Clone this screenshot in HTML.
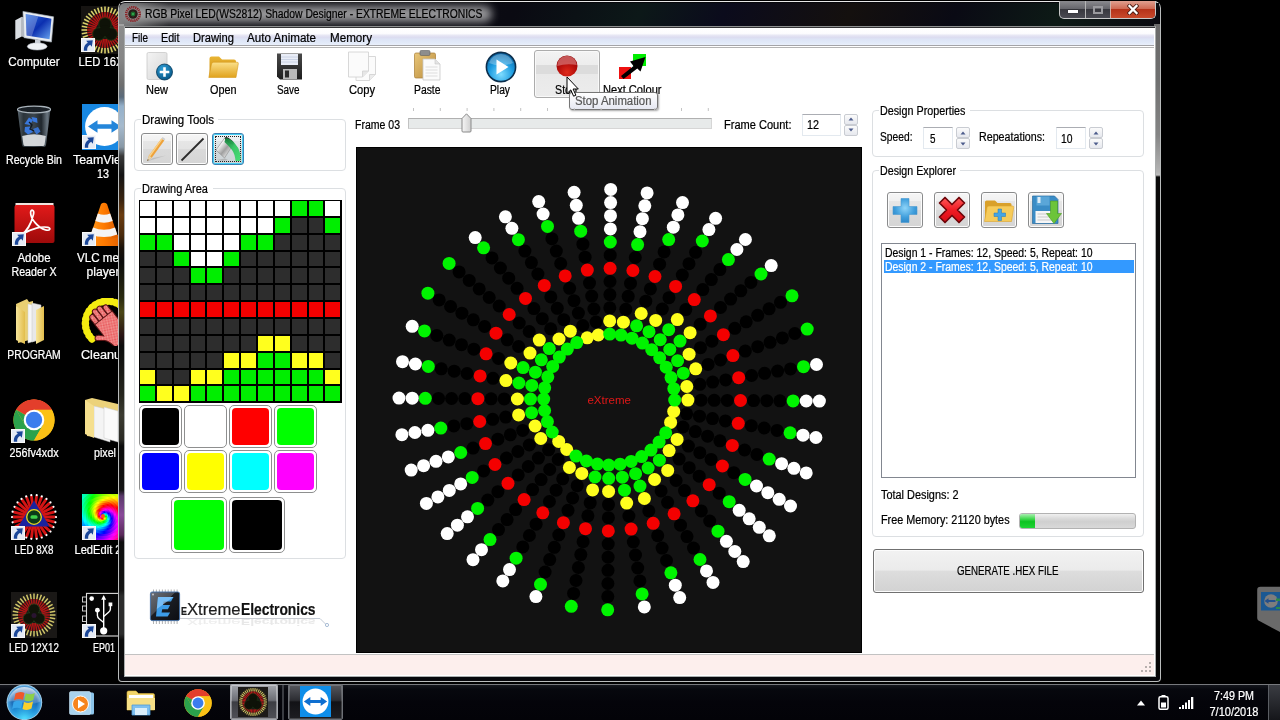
<!DOCTYPE html>
<html><head><meta charset="utf-8"><title>RGB Pixel LED(WS2812) Shadow Designer</title>
<style>
html,body{margin:0;padding:0}
body{width:1280px;height:720px;background:#000;position:relative;overflow:hidden;font-family:"Liberation Sans", sans-serif;font-size:12px}
div,span.t,svg{position:absolute;box-sizing:border-box}
span.t{white-space:nowrap;line-height:1;-webkit-text-stroke:.22px currentColor}
.gb{border:1px solid #dcdfe2;border-radius:4px}
.btn{border:1px solid #8a8b8c;border-radius:3px;background:linear-gradient(#f6f6f6 0,#f0f0f0 24%,#e6e6e6 25%,#e3e3e3 50%,#dadada 51%,#d5d5d5 100%);box-shadow:inset 0 0 0 1px #fcfcfc}
.num{border:1px solid #e3e9ef;border-top-color:#abadb3;background:#fff}
.pal{border:1px solid #8e8f8f;border-radius:5px;background:#fff}
.pal>i{position:absolute;left:2px;top:2px;right:2px;bottom:2px;border-radius:4px}
</style></head>
<body>
<div id="root" style="left:0;top:0;width:1280px;height:720px;will-change:transform">
<svg style="left:12px;top:8px" width="46" height="44" viewBox="0 0 42 40"><defs><linearGradient id="gsc" x1="0" y1="0" x2="1" y2="1"><stop offset="0" stop-color="#2d6fe0"/><stop offset=".5" stop-color="#0b2fb0"/><stop offset="1" stop-color="#6aa6f0"/></linearGradient></defs><path d="M3 11l6-3v18l-6 3z" fill="#d9dde2"/><path d="M9 8l3 1v18l-3-1z" fill="#b5bac2"/><path d="M10 3 38 8 36 31 11 27z" fill="#e8ecf1" stroke="#aab2bd" stroke-width=".6"/><path d="M12.500 5.500 36 9.800 34.300 28.500 13.300 25z" fill="url(#gsc)"/><path d="M12.500 5.500 24 7.600 18 26 13.300 25z" fill="#fff" opacity=".25"/><path d="M21 28.500l5 .8v4h-5z" fill="#c9ced6"/><ellipse cx="23" cy="35" rx="9" ry="3.300" fill="#eef1f5" stroke="#b6bcc6" stroke-width=".5"/></svg>
<span class="t" id="t0" style="font-size:12px;color:#fff;top:56.00px;left:34px;transform:translateX(-50%) scaleX(0.977);text-shadow:0 1px 2px #000,0 0 3px #000;">Computer</span>
<svg style="left:80.5px;top:5.5px" width="48" height="48" viewBox="0 0 48 48"><rect width="48" height="48" fill="#161412"/><line x1="33.0" y1="24.0" x2="42.0" y2="24.0" stroke="#b01414" stroke-width="1.6" stroke-linecap="butt"/><line x1="42.0" y1="24.0" x2="47.5" y2="24.0" stroke="#d9cf6a" stroke-width="1.6" stroke-linecap="butt"/><line x1="32.9" y1="25.4" x2="41.8" y2="26.8" stroke="#b01414" stroke-width="1.6" stroke-linecap="butt"/><line x1="41.8" y1="26.8" x2="47.2" y2="27.7" stroke="#d9cf6a" stroke-width="1.6" stroke-linecap="butt"/><line x1="32.6" y1="26.8" x2="41.1" y2="29.6" stroke="#b01414" stroke-width="1.6" stroke-linecap="butt"/><line x1="41.1" y1="29.6" x2="46.3" y2="31.3" stroke="#d9cf6a" stroke-width="1.6" stroke-linecap="butt"/><line x1="32.0" y1="28.1" x2="40.0" y2="32.2" stroke="#b01414" stroke-width="1.6" stroke-linecap="butt"/><line x1="40.0" y1="32.2" x2="44.9" y2="34.7" stroke="#d9cf6a" stroke-width="1.6" stroke-linecap="butt"/><line x1="31.3" y1="29.3" x2="38.6" y2="34.6" stroke="#b01414" stroke-width="1.6" stroke-linecap="butt"/><line x1="38.6" y1="34.6" x2="43.0" y2="37.8" stroke="#d9cf6a" stroke-width="1.6" stroke-linecap="butt"/><line x1="30.4" y1="30.4" x2="36.7" y2="36.7" stroke="#b01414" stroke-width="1.6" stroke-linecap="butt"/><line x1="36.7" y1="36.7" x2="40.6" y2="40.6" stroke="#d9cf6a" stroke-width="1.6" stroke-linecap="butt"/><line x1="29.3" y1="31.3" x2="34.6" y2="38.6" stroke="#b01414" stroke-width="1.6" stroke-linecap="butt"/><line x1="34.6" y1="38.6" x2="37.8" y2="43.0" stroke="#d9cf6a" stroke-width="1.6" stroke-linecap="butt"/><line x1="28.1" y1="32.0" x2="32.2" y2="40.0" stroke="#b01414" stroke-width="1.6" stroke-linecap="butt"/><line x1="32.2" y1="40.0" x2="34.7" y2="44.9" stroke="#d9cf6a" stroke-width="1.6" stroke-linecap="butt"/><line x1="26.8" y1="32.6" x2="29.6" y2="41.1" stroke="#b01414" stroke-width="1.6" stroke-linecap="butt"/><line x1="29.6" y1="41.1" x2="31.3" y2="46.3" stroke="#d9cf6a" stroke-width="1.6" stroke-linecap="butt"/><line x1="25.4" y1="32.9" x2="26.8" y2="41.8" stroke="#b01414" stroke-width="1.6" stroke-linecap="butt"/><line x1="26.8" y1="41.8" x2="27.7" y2="47.2" stroke="#d9cf6a" stroke-width="1.6" stroke-linecap="butt"/><line x1="24.0" y1="33.0" x2="24.0" y2="42.0" stroke="#b01414" stroke-width="1.6" stroke-linecap="butt"/><line x1="24.0" y1="42.0" x2="24.0" y2="47.5" stroke="#d9cf6a" stroke-width="1.6" stroke-linecap="butt"/><line x1="22.6" y1="32.9" x2="21.2" y2="41.8" stroke="#b01414" stroke-width="1.6" stroke-linecap="butt"/><line x1="21.2" y1="41.8" x2="20.3" y2="47.2" stroke="#d9cf6a" stroke-width="1.6" stroke-linecap="butt"/><line x1="21.2" y1="32.6" x2="18.4" y2="41.1" stroke="#b01414" stroke-width="1.6" stroke-linecap="butt"/><line x1="18.4" y1="41.1" x2="16.7" y2="46.3" stroke="#d9cf6a" stroke-width="1.6" stroke-linecap="butt"/><line x1="19.9" y1="32.0" x2="15.8" y2="40.0" stroke="#b01414" stroke-width="1.6" stroke-linecap="butt"/><line x1="15.8" y1="40.0" x2="13.3" y2="44.9" stroke="#d9cf6a" stroke-width="1.6" stroke-linecap="butt"/><line x1="18.7" y1="31.3" x2="13.4" y2="38.6" stroke="#b01414" stroke-width="1.6" stroke-linecap="butt"/><line x1="13.4" y1="38.6" x2="10.2" y2="43.0" stroke="#d9cf6a" stroke-width="1.6" stroke-linecap="butt"/><line x1="17.6" y1="30.4" x2="11.3" y2="36.7" stroke="#b01414" stroke-width="1.6" stroke-linecap="butt"/><line x1="11.3" y1="36.7" x2="7.4" y2="40.6" stroke="#d9cf6a" stroke-width="1.6" stroke-linecap="butt"/><line x1="16.7" y1="29.3" x2="9.4" y2="34.6" stroke="#b01414" stroke-width="1.6" stroke-linecap="butt"/><line x1="9.4" y1="34.6" x2="5.0" y2="37.8" stroke="#d9cf6a" stroke-width="1.6" stroke-linecap="butt"/><line x1="16.0" y1="28.1" x2="8.0" y2="32.2" stroke="#b01414" stroke-width="1.6" stroke-linecap="butt"/><line x1="8.0" y1="32.2" x2="3.1" y2="34.7" stroke="#d9cf6a" stroke-width="1.6" stroke-linecap="butt"/><line x1="15.4" y1="26.8" x2="6.9" y2="29.6" stroke="#b01414" stroke-width="1.6" stroke-linecap="butt"/><line x1="6.9" y1="29.6" x2="1.7" y2="31.3" stroke="#d9cf6a" stroke-width="1.6" stroke-linecap="butt"/><line x1="15.1" y1="25.4" x2="6.2" y2="26.8" stroke="#b01414" stroke-width="1.6" stroke-linecap="butt"/><line x1="6.2" y1="26.8" x2="0.8" y2="27.7" stroke="#d9cf6a" stroke-width="1.6" stroke-linecap="butt"/><line x1="15.0" y1="24.0" x2="6.0" y2="24.0" stroke="#b01414" stroke-width="1.6" stroke-linecap="butt"/><line x1="6.0" y1="24.0" x2="0.5" y2="24.0" stroke="#d9cf6a" stroke-width="1.6" stroke-linecap="butt"/><line x1="15.1" y1="22.6" x2="6.2" y2="21.2" stroke="#b01414" stroke-width="1.6" stroke-linecap="butt"/><line x1="6.2" y1="21.2" x2="0.8" y2="20.3" stroke="#d9cf6a" stroke-width="1.6" stroke-linecap="butt"/><line x1="15.4" y1="21.2" x2="6.9" y2="18.4" stroke="#b01414" stroke-width="1.6" stroke-linecap="butt"/><line x1="6.9" y1="18.4" x2="1.7" y2="16.7" stroke="#d9cf6a" stroke-width="1.6" stroke-linecap="butt"/><line x1="16.0" y1="19.9" x2="8.0" y2="15.8" stroke="#b01414" stroke-width="1.6" stroke-linecap="butt"/><line x1="8.0" y1="15.8" x2="3.1" y2="13.3" stroke="#d9cf6a" stroke-width="1.6" stroke-linecap="butt"/><line x1="16.7" y1="18.7" x2="9.4" y2="13.4" stroke="#b01414" stroke-width="1.6" stroke-linecap="butt"/><line x1="9.4" y1="13.4" x2="5.0" y2="10.2" stroke="#d9cf6a" stroke-width="1.6" stroke-linecap="butt"/><line x1="17.6" y1="17.6" x2="11.3" y2="11.3" stroke="#b01414" stroke-width="1.6" stroke-linecap="butt"/><line x1="11.3" y1="11.3" x2="7.4" y2="7.4" stroke="#d9cf6a" stroke-width="1.6" stroke-linecap="butt"/><line x1="18.7" y1="16.7" x2="13.4" y2="9.4" stroke="#b01414" stroke-width="1.6" stroke-linecap="butt"/><line x1="13.4" y1="9.4" x2="10.2" y2="5.0" stroke="#d9cf6a" stroke-width="1.6" stroke-linecap="butt"/><line x1="19.9" y1="16.0" x2="15.8" y2="8.0" stroke="#b01414" stroke-width="1.6" stroke-linecap="butt"/><line x1="15.8" y1="8.0" x2="13.3" y2="3.1" stroke="#d9cf6a" stroke-width="1.6" stroke-linecap="butt"/><line x1="21.2" y1="15.4" x2="18.4" y2="6.9" stroke="#b01414" stroke-width="1.6" stroke-linecap="butt"/><line x1="18.4" y1="6.9" x2="16.7" y2="1.7" stroke="#d9cf6a" stroke-width="1.6" stroke-linecap="butt"/><line x1="22.6" y1="15.1" x2="21.2" y2="6.2" stroke="#b01414" stroke-width="1.6" stroke-linecap="butt"/><line x1="21.2" y1="6.2" x2="20.3" y2="0.8" stroke="#d9cf6a" stroke-width="1.6" stroke-linecap="butt"/><line x1="24.0" y1="15.0" x2="24.0" y2="6.0" stroke="#b01414" stroke-width="1.6" stroke-linecap="butt"/><line x1="24.0" y1="6.0" x2="24.0" y2="0.5" stroke="#d9cf6a" stroke-width="1.6" stroke-linecap="butt"/><line x1="25.4" y1="15.1" x2="26.8" y2="6.2" stroke="#b01414" stroke-width="1.6" stroke-linecap="butt"/><line x1="26.8" y1="6.2" x2="27.7" y2="0.8" stroke="#d9cf6a" stroke-width="1.6" stroke-linecap="butt"/><line x1="26.8" y1="15.4" x2="29.6" y2="6.9" stroke="#b01414" stroke-width="1.6" stroke-linecap="butt"/><line x1="29.6" y1="6.9" x2="31.3" y2="1.7" stroke="#d9cf6a" stroke-width="1.6" stroke-linecap="butt"/><line x1="28.1" y1="16.0" x2="32.2" y2="8.0" stroke="#b01414" stroke-width="1.6" stroke-linecap="butt"/><line x1="32.2" y1="8.0" x2="34.7" y2="3.1" stroke="#d9cf6a" stroke-width="1.6" stroke-linecap="butt"/><line x1="29.3" y1="16.7" x2="34.6" y2="9.4" stroke="#b01414" stroke-width="1.6" stroke-linecap="butt"/><line x1="34.6" y1="9.4" x2="37.8" y2="5.0" stroke="#d9cf6a" stroke-width="1.6" stroke-linecap="butt"/><line x1="30.4" y1="17.6" x2="36.7" y2="11.3" stroke="#b01414" stroke-width="1.6" stroke-linecap="butt"/><line x1="36.7" y1="11.3" x2="40.6" y2="7.4" stroke="#d9cf6a" stroke-width="1.6" stroke-linecap="butt"/><line x1="31.3" y1="18.7" x2="38.6" y2="13.4" stroke="#b01414" stroke-width="1.6" stroke-linecap="butt"/><line x1="38.6" y1="13.4" x2="43.0" y2="10.2" stroke="#d9cf6a" stroke-width="1.6" stroke-linecap="butt"/><line x1="32.0" y1="19.9" x2="40.0" y2="15.8" stroke="#b01414" stroke-width="1.6" stroke-linecap="butt"/><line x1="40.0" y1="15.8" x2="44.9" y2="13.3" stroke="#d9cf6a" stroke-width="1.6" stroke-linecap="butt"/><line x1="32.6" y1="21.2" x2="41.1" y2="18.4" stroke="#b01414" stroke-width="1.6" stroke-linecap="butt"/><line x1="41.1" y1="18.4" x2="46.3" y2="16.7" stroke="#d9cf6a" stroke-width="1.6" stroke-linecap="butt"/><line x1="32.9" y1="22.6" x2="41.8" y2="21.2" stroke="#b01414" stroke-width="1.6" stroke-linecap="butt"/><line x1="41.8" y1="21.2" x2="47.2" y2="20.3" stroke="#d9cf6a" stroke-width="1.6" stroke-linecap="butt"/><g fill="#0e1208" stroke="#1c3a12" stroke-width=".8"><circle cx="24" cy="18" r="6.300"/><circle cx="18" cy="28" r="6.300"/><circle cx="30" cy="28" r="6.300"/></g><circle cx="24" cy="24.500" r="5.500" fill="#0e1208"/></svg>
<svg style="left:81px;top:38px" width="14" height="14" viewBox="0 0 14 14"><rect x=".5" y=".5" width="13" height="13" fill="#e4eaf4" stroke="#f8f8f8" stroke-width="1"/><path d="M2.800 12.800C2.600 8.600 4 6 6.800 4.800L5.200 2.800 11.800 2.200 10.800 8.800 9.200 6.800C7 7.800 5.800 9.800 6.200 12.800z" fill="#1a4698"/></svg>
<span class="t" id="t1" style="font-size:12px;color:#fff;top:56.00px;left:100.5px;transform:translateX(-50%) scaleX(0.937);text-shadow:0 1px 2px #000,0 0 3px #000;">LED 16X</span>
<svg style="left:16px;top:105px" width="36" height="43" viewBox="0 0 36 43"><defs><linearGradient id="grb" x1="0" y1="0" x2="1" y2="0"><stop offset="0" stop-color="#59656e"/><stop offset=".18" stop-color="#2c353c"/><stop offset=".5" stop-color="#3a444c"/><stop offset=".72" stop-color="#20272d"/><stop offset=".9" stop-color="#6a7680"/><stop offset="1" stop-color="#3a444c"/></linearGradient></defs><path d="M1.500 4.500h33l-4.500 35.500q-.3 2-2.300 2H8.300q-2 0-2.300-2z" fill="url(#grb)"/><ellipse cx="18" cy="4.500" rx="16.500" ry="3.300" fill="#1a2026" stroke="#aab4bc" stroke-width="1.200"/><path d="M6.200 31q12-3.500 23.600 0l-1.200 8.500q-.2 1.500-1.800 1.500H9.200q-1.600 0-1.800-1.500z" fill="#e2e4e6" opacity=".92"/><g fill="#3a78dc"><path d="M8.500 19l4.500-6.500 4 2.500-3 5z"/><path d="M15.500 12l5.500 1 .5 5-4.500-1.500z"/><path d="M9 22l5-.5 3 5.500-5 2.500-3.500-3z"/><path d="M17 24l5-2 2.500 4.500-4 3z" opacity=".9"/></g><path d="M13 17l3 3-2 4 4 2" fill="none" stroke="#101820" stroke-width="1.300"/></svg>
<span class="t" id="t2" style="font-size:12px;color:#fff;top:153.50px;left:34px;transform:translateX(-50%) scaleX(0.884);text-shadow:0 1px 2px #000,0 0 3px #000;">Recycle Bin</span>
<svg style="left:82px;top:104px" width="46" height="46" viewBox="0 0 46 46"><rect width="46" height="46" fill="#1888e2"/><circle cx="22.500" cy="22.500" r="19.400" fill="#fff"/><path d="M6 22.500l9.500-6.200v4h14v-4L39 22.500l-9.500 6.200v-4h-14v4z" fill="#2486da"/></svg>
<svg style="left:82px;top:135px" width="14" height="14" viewBox="0 0 14 14"><rect x=".5" y=".5" width="13" height="13" fill="#e4eaf4" stroke="#f8f8f8" stroke-width="1"/><path d="M2.800 12.800C2.600 8.600 4 6 6.800 4.800L5.200 2.800 11.800 2.200 10.800 8.800 9.200 6.800C7 7.800 5.800 9.800 6.200 12.800z" fill="#1a4698"/></svg>
<span class="t" id="t3" style="font-size:12px;color:#fff;top:153.50px;left:97px;transform:translateX(-50%) scaleX(1.033);text-shadow:0 1px 2px #000,0 0 3px #000;">TeamVie</span>
<span class="t" id="t4" style="font-size:12px;color:#fff;top:167.50px;left:102.5px;transform:translateX(-50%) scaleX(0.898);text-shadow:0 1px 2px #000,0 0 3px #000;">13</span>
<svg style="left:12.5px;top:200.5px" width="43" height="43" viewBox="0 0 42 43"><defs><linearGradient id="gad" x1="0" y1="0" x2="0" y2="1"><stop offset="0" stop-color="#e21a1a"/><stop offset="1" stop-color="#9d0a0a"/></linearGradient></defs><path d="M2 2h38v3H2z" fill="#f0e4e0"/><rect x="1" y="4" width="40" height="38" rx="2" fill="url(#gad)"/><path d="M10 33c4-2 8-9 10-17 1-4-2.500-5-2.500-1.500 0 5 6 13 13 15 4 1 5-1.500 2-2.200-5-1.200-14 1-22 5.700z" fill="none" stroke="#fff" stroke-width="1.500" transform="translate(-3 -5) scale(1.150)"/></svg>
<svg style="left:11.5px;top:232px" width="14" height="14" viewBox="0 0 14 14"><rect x=".5" y=".5" width="13" height="13" fill="#e4eaf4" stroke="#f8f8f8" stroke-width="1"/><path d="M2.800 12.800C2.600 8.600 4 6 6.800 4.800L5.200 2.800 11.800 2.200 10.800 8.800 9.200 6.800C7 7.800 5.800 9.800 6.200 12.800z" fill="#1a4698"/></svg>
<span class="t" id="t5" style="font-size:12px;color:#fff;top:251.50px;left:33.5px;transform:translateX(-50%) scaleX(0.951);text-shadow:0 1px 2px #000,0 0 3px #000;">Adobe</span>
<span class="t" id="t6" style="font-size:12px;color:#fff;top:265.50px;left:33.5px;transform:translateX(-50%) scaleX(0.888);text-shadow:0 1px 2px #000,0 0 3px #000;">Reader X</span>
<svg style="left:82px;top:201px" width="44" height="46" viewBox="0 0 44 46"><defs><linearGradient id="gvl" x1="0" y1="0" x2="1" y2="0"><stop offset="0" stop-color="#ff9a1e"/><stop offset=".5" stop-color="#ff7a00"/><stop offset="1" stop-color="#d95a00"/></linearGradient></defs><path d="M4 34h36l3 9q.5 2-1.500 2H2.500q-2 0-1.500-2z" fill="url(#gvl)"/><path d="M19 3q3-2.500 6 0l11 33q-14 6-28 0z" fill="url(#gvl)"/><path d="M15.800 12.500q6.200 2.500 12.400 0l2.500 7.500q-8.700 3.500-17.400 0z" fill="#f4f4f4"/><path d="M11 26.500q11 4.500 22 0l2.300 7q-13.300 5-26.600 0z" fill="#f4f4f4"/></svg>
<svg style="left:82px;top:232px" width="14" height="14" viewBox="0 0 14 14"><rect x=".5" y=".5" width="13" height="13" fill="#e4eaf4" stroke="#f8f8f8" stroke-width="1"/><path d="M2.800 12.800C2.600 8.600 4 6 6.800 4.800L5.200 2.800 11.800 2.200 10.800 8.800 9.200 6.800C7 7.800 5.800 9.800 6.200 12.800z" fill="#1a4698"/></svg>
<span class="t" id="t7" style="font-size:12px;color:#fff;top:251.50px;left:97.5px;transform:translateX(-50%) scaleX(0.969);text-shadow:0 1px 2px #000,0 0 3px #000;">VLC me</span>
<span class="t" id="t8" style="font-size:12px;color:#fff;top:265.50px;left:103px;transform:translateX(-50%) scaleX(1.010);text-shadow:0 1px 2px #000,0 0 3px #000;">player</span>
<svg style="left:14px;top:298px" width="36" height="47" viewBox="0 0 36 47"><defs><linearGradient id="gfd" x1="0" y1="0" x2="1" y2="0"><stop offset="0" stop-color="#f7e59a"/><stop offset="1" stop-color="#e2bd4c"/></linearGradient></defs><path d="M2 6 13 1l2 3 4-1v38L4 45z" fill="#e9cf72"/><path d="M14 6l10 2v34l-10 3z" fill="#f6f6f6" stroke="#cfcfcf" stroke-width=".5"/><path d="M18 5l9 2v34l-9 3z" fill="#e8e8e8" stroke="#c4c4c4" stroke-width=".5"/><path d="M2 8l9 6v32l-9-4z" fill="url(#gfd)"/><path d="M22 12 30 8v34l-8 4z" fill="url(#gfd)"/></svg>
<span class="t" id="t9" style="font-size:12px;color:#fff;top:348.50px;left:33.5px;transform:translateX(-50%) scaleX(0.863);text-shadow:0 1px 2px #000,0 0 3px #000;">PROGRAM</span>
<svg style="left:80px;top:298px" width="48" height="48" viewBox="0 0 48 48"><defs><pattern id="pdot" width="2" height="2" patternUnits="userSpaceOnUse"><rect width="2" height="2" fill="#f29a96"/><rect width="1" height="1" fill="#e8565a"/><rect x="1" y="1" width="1" height="1" fill="#e8565a"/></pattern></defs><path d="M43 9.500A21 21 0 1 0 12 41" fill="none" stroke="#f4ec10" stroke-width="7.500" stroke-linecap="round" stroke-dasharray="0.100 4.200"/><path d="M43 9.500A21 21 0 1 0 12 41" fill="none" stroke="#f4ec10" stroke-width="5.500"/><g transform="rotate(-38 28 26) translate(-2.500 -1.500) scale(1.100)" stroke="#5a1414" stroke-width=".9" fill="url(#pdot)"><rect x="18" y="9" width="4.600" height="13" rx="2.300"/><rect x="23" y="6.500" width="4.600" height="15" rx="2.300"/><rect x="28" y="7" width="4.600" height="15" rx="2.300"/><rect x="33" y="9.500" width="4.600" height="13" rx="2.300"/><path d="M18 18h20v14q0 4 3 14H20q-1-8-4-11l-5-4q-2-2 0-3.500t4 .5l3 3z"/></g></svg>
<span class="t" id="t10" style="font-size:12px;color:#fff;top:348.50px;left:101px;transform:translateX(-50%) scaleX(1.052);text-shadow:0 1px 2px #000,0 0 3px #000;">Cleanu</span>
<svg style="left:13px;top:399px" width="42" height="42" viewBox="-50 -50 100 100"><circle r="49" fill="#fbc116"/><path d="M0 0 L-42.400 -24.500 A49 49 0 0 1 42.400 -24.500 L0 -24.500z" fill="#e33e2b"/><path d="M-42.400 -24.500 A49 49 0 0 1 42.400 -24.500 L0 -24.500z" fill="#e33e2b"/><path d="M-42.400 -24.500 A49 49 0 0 0 0 49 L21.200 12.200 L-21.200 12.200z" fill="#2ba24c"/><path d="M0 0L-42.400 -24.500 -21.200 12.200z" fill="#2ba24c"/><path d="M42.400 -24.500H0L21.200 12.200 0 49A49 49 0 0 0 42.400 -24.500z" fill="#fbc116"/><circle r="24.500" fill="#fff"/><circle r="19.500" fill="#3b7ded"/></svg>
<svg style="left:11px;top:429px" width="14" height="14" viewBox="0 0 14 14"><rect x=".5" y=".5" width="13" height="13" fill="#e4eaf4" stroke="#f8f8f8" stroke-width="1"/><path d="M2.800 12.800C2.600 8.600 4 6 6.800 4.800L5.200 2.800 11.800 2.200 10.800 8.800 9.200 6.800C7 7.800 5.800 9.800 6.200 12.800z" fill="#1a4698"/></svg>
<span class="t" id="t11" style="font-size:12px;color:#fff;top:446.50px;left:33.5px;transform:translateX(-50%) scaleX(0.896);text-shadow:0 1px 2px #000,0 0 3px #000;">256fv4xdx</span>
<svg style="left:84px;top:397px" width="40" height="47" viewBox="0 0 40 47"><path d="M1 3 8 1l26 6v36L3 39z" fill="#ecd27a"/><path d="M10 9 26 13v32L10 40z" fill="#f4f4f4" stroke="#c9c9c9" stroke-width=".5"/><path d="M20 10l14 4v31l-14-4z" fill="#fafafa" stroke="#c9c9c9" stroke-width=".5"/><path d="M1 3l9 6v32l-9-4z" fill="#f5df8e"/></svg>
<span class="t" id="t12" style="font-size:12px;color:#fff;top:446.50px;left:104.5px;transform:translateX(-50%) scaleX(0.891);text-shadow:0 1px 2px #000,0 0 3px #000;">pixel</span>
<svg style="left:11px;top:494px" width="46" height="46" viewBox="0 0 46 46"><line x1="32.0" y1="23.0" x2="43.5" y2="23.0" stroke="#d41414" stroke-width="2.8" stroke-linecap="round"/><line x1="31.7" y1="25.2" x2="42.9" y2="27.9" stroke="#d41414" stroke-width="2.8" stroke-linecap="round"/><line x1="31.0" y1="27.2" x2="41.2" y2="32.5" stroke="#d41414" stroke-width="2.8" stroke-linecap="round"/><line x1="29.7" y1="29.0" x2="38.3" y2="36.6" stroke="#d41414" stroke-width="2.8" stroke-linecap="round"/><line x1="28.1" y1="30.4" x2="34.6" y2="39.9" stroke="#d41414" stroke-width="2.8" stroke-linecap="round"/><line x1="26.2" y1="31.4" x2="30.3" y2="42.2" stroke="#d41414" stroke-width="2.8" stroke-linecap="round"/><line x1="24.1" y1="31.9" x2="25.5" y2="43.4" stroke="#d41414" stroke-width="2.8" stroke-linecap="round"/><line x1="21.9" y1="31.9" x2="20.5" y2="43.4" stroke="#d41414" stroke-width="2.8" stroke-linecap="round"/><line x1="19.8" y1="31.4" x2="15.7" y2="42.2" stroke="#d41414" stroke-width="2.8" stroke-linecap="round"/><line x1="17.9" y1="30.4" x2="11.4" y2="39.9" stroke="#d41414" stroke-width="2.8" stroke-linecap="round"/><line x1="16.3" y1="29.0" x2="7.7" y2="36.6" stroke="#d41414" stroke-width="2.8" stroke-linecap="round"/><line x1="15.0" y1="27.2" x2="4.8" y2="32.5" stroke="#d41414" stroke-width="2.8" stroke-linecap="round"/><line x1="14.3" y1="25.2" x2="3.1" y2="27.9" stroke="#d41414" stroke-width="2.8" stroke-linecap="round"/><line x1="14.0" y1="23.0" x2="2.5" y2="23.0" stroke="#d41414" stroke-width="2.8" stroke-linecap="round"/><line x1="14.3" y1="20.8" x2="3.1" y2="18.1" stroke="#d41414" stroke-width="2.8" stroke-linecap="round"/><line x1="15.0" y1="18.8" x2="4.8" y2="13.5" stroke="#d41414" stroke-width="2.8" stroke-linecap="round"/><line x1="16.3" y1="17.0" x2="7.7" y2="9.4" stroke="#d41414" stroke-width="2.8" stroke-linecap="round"/><line x1="17.9" y1="15.6" x2="11.4" y2="6.1" stroke="#d41414" stroke-width="2.8" stroke-linecap="round"/><line x1="19.8" y1="14.6" x2="15.7" y2="3.8" stroke="#d41414" stroke-width="2.8" stroke-linecap="round"/><line x1="21.9" y1="14.1" x2="20.5" y2="2.6" stroke="#d41414" stroke-width="2.8" stroke-linecap="round"/><line x1="24.1" y1="14.1" x2="25.5" y2="2.6" stroke="#d41414" stroke-width="2.8" stroke-linecap="round"/><line x1="26.2" y1="14.6" x2="30.3" y2="3.8" stroke="#d41414" stroke-width="2.8" stroke-linecap="round"/><line x1="28.1" y1="15.6" x2="34.6" y2="6.1" stroke="#d41414" stroke-width="2.8" stroke-linecap="round"/><line x1="29.7" y1="17.0" x2="38.3" y2="9.4" stroke="#d41414" stroke-width="2.8" stroke-linecap="round"/><line x1="31.0" y1="18.8" x2="41.2" y2="13.5" stroke="#d41414" stroke-width="2.8" stroke-linecap="round"/><line x1="31.7" y1="20.8" x2="42.9" y2="18.1" stroke="#d41414" stroke-width="2.8" stroke-linecap="round"/><path d="M23 6.500 38.500 32.500H7.500z" fill="#1a22a0"/><circle cx="23" cy="23" r="7.300" fill="#0c3a18" stroke="#e8dc1e" stroke-width="1.300"/><rect x="19.500" y="21.300" width="7" height="3.400" rx="1.500" fill="#3fd04a"/></svg>
<svg style="left:11px;top:494px" width="46" height="46" viewBox="0 0 46 46"><circle cx="45.0" cy="23.0" r="1.100" fill="#fff"/><circle cx="44.4" cy="28.3" r="1.100" fill="#fff"/><circle cx="42.5" cy="33.2" r="1.100" fill="#fff"/><circle cx="39.5" cy="37.6" r="1.100" fill="#fff"/><circle cx="35.5" cy="41.1" r="1.100" fill="#fff"/><circle cx="30.8" cy="43.6" r="1.100" fill="#fff"/><circle cx="25.7" cy="44.8" r="1.100" fill="#fff"/><circle cx="20.3" cy="44.8" r="1.100" fill="#fff"/><circle cx="15.2" cy="43.6" r="1.100" fill="#fff"/><circle cx="10.5" cy="41.1" r="1.100" fill="#fff"/><circle cx="6.5" cy="37.6" r="1.100" fill="#fff"/><circle cx="3.5" cy="33.2" r="1.100" fill="#fff"/><circle cx="1.6" cy="28.3" r="1.100" fill="#fff"/><circle cx="1.0" cy="23.0" r="1.100" fill="#fff"/><circle cx="1.6" cy="17.7" r="1.100" fill="#fff"/><circle cx="3.5" cy="12.8" r="1.100" fill="#fff"/><circle cx="6.5" cy="8.4" r="1.100" fill="#fff"/><circle cx="10.5" cy="4.9" r="1.100" fill="#fff"/><circle cx="15.2" cy="2.4" r="1.100" fill="#fff"/><circle cx="20.3" cy="1.2" r="1.100" fill="#fff"/><circle cx="25.7" cy="1.2" r="1.100" fill="#fff"/><circle cx="30.8" cy="2.4" r="1.100" fill="#fff"/><circle cx="35.5" cy="4.9" r="1.100" fill="#fff"/><circle cx="39.5" cy="8.4" r="1.100" fill="#fff"/><circle cx="42.5" cy="12.8" r="1.100" fill="#fff"/><circle cx="44.4" cy="17.7" r="1.100" fill="#fff"/></svg>
<svg style="left:11px;top:526px" width="14" height="14" viewBox="0 0 14 14"><rect x=".5" y=".5" width="13" height="13" fill="#e4eaf4" stroke="#f8f8f8" stroke-width="1"/><path d="M2.800 12.800C2.600 8.600 4 6 6.800 4.800L5.200 2.800 11.800 2.200 10.800 8.800 9.200 6.800C7 7.800 5.800 9.800 6.200 12.800z" fill="#1a4698"/></svg>
<span class="t" id="t13" style="font-size:12px;color:#fff;top:543.50px;left:33.5px;transform:translateX(-50%) scaleX(0.812);text-shadow:0 1px 2px #000,0 0 3px #000;">LED 8X8</span>
<div style="left:82px;top:494px;width:46px;height:46px;overflow:hidden;background:#0f0"><div style="left:-12.7px;top:-11.8px;width:68px;height:68px;border-radius:50%;background:conic-gradient(from 135deg,#f00,#f0f,#00f,#0ff,#0f0,#ff0,#f00)"></div><div style="left:-8.7px;top:-7.8px;width:60px;height:60px;border-radius:50%;background:conic-gradient(from 120deg,#f00,#f0f,#00f,#0ff,#0f0,#ff0,#f00)"></div><div style="left:-4.7px;top:-3.8px;width:52px;height:52px;border-radius:50%;background:conic-gradient(from 104deg,#f00,#f0f,#00f,#0ff,#0f0,#ff0,#f00)"></div><div style="left:-1.7px;top:-0.8px;width:46px;height:46px;border-radius:50%;background:conic-gradient(from 90deg,#f00,#f0f,#00f,#0ff,#0f0,#ff0,#f00)"></div><div style="left:1.3px;top:2.2px;width:40px;height:40px;border-radius:50%;background:conic-gradient(from 74deg,#f00,#f0f,#00f,#0ff,#0f0,#ff0,#f00)"></div><div style="left:3.8px;top:4.7px;width:35.0px;height:35.0px;border-radius:50%;background:conic-gradient(from 58deg,#f00,#f0f,#00f,#0ff,#0f0,#ff0,#f00)"></div><div style="left:6.3px;top:7.2px;width:30px;height:30px;border-radius:50%;background:conic-gradient(from 40deg,#f00,#f0f,#00f,#0ff,#0f0,#ff0,#f00)"></div><div style="left:8.3px;top:9.2px;width:26px;height:26px;border-radius:50%;background:conic-gradient(from 23deg,#f00,#f0f,#00f,#0ff,#0f0,#ff0,#f00)"></div><div style="left:10.3px;top:11.2px;width:22px;height:22px;border-radius:50%;background:conic-gradient(from 3deg,#f00,#f0f,#00f,#0ff,#0f0,#ff0,#f00)"></div><div style="left:11.8px;top:12.7px;width:19.0px;height:19.0px;border-radius:50%;background:conic-gradient(from -15deg,#f00,#f0f,#00f,#0ff,#0f0,#ff0,#f00)"></div><div style="left:13.3px;top:14.2px;width:16px;height:16px;border-radius:50%;background:conic-gradient(from -36deg,#f00,#f0f,#00f,#0ff,#0f0,#ff0,#f00)"></div><div style="left:14.8px;top:15.7px;width:13.0px;height:13.0px;border-radius:50%;background:conic-gradient(from -62deg,#f00,#f0f,#00f,#0ff,#0f0,#ff0,#f00)"></div><div style="left:16.3px;top:17.2px;width:10px;height:10px;border-radius:50%;background:conic-gradient(from -98deg,#f00,#f0f,#00f,#0ff,#0f0,#ff0,#f00)"></div><div style="left:17.8px;top:18.7px;width:7.0px;height:7.0px;border-radius:50%;background:conic-gradient(from -149deg,#f00,#f0f,#00f,#0ff,#0f0,#ff0,#f00)"></div><div style="left:19.1px;top:20.0px;width:4.4px;height:4.4px;border-radius:50%;background:#ff5a10"></div></div>
<svg style="left:82px;top:526px" width="14" height="14" viewBox="0 0 14 14"><rect x=".5" y=".5" width="13" height="13" fill="#e4eaf4" stroke="#f8f8f8" stroke-width="1"/><path d="M2.800 12.800C2.600 8.600 4 6 6.800 4.800L5.200 2.800 11.800 2.200 10.800 8.800 9.200 6.800C7 7.800 5.800 9.800 6.200 12.800z" fill="#1a4698"/></svg>
<span class="t" id="t14" style="font-size:12px;color:#fff;top:543.50px;left:97.5px;transform:translateX(-50%) scaleX(0.927);text-shadow:0 1px 2px #000,0 0 3px #000;">LedEdit 2</span>
<svg style="left:11px;top:592px" width="46" height="46" viewBox="0 0 46 46"><rect width="46" height="46" fill="#1a1816"/><line x1="31.0" y1="23.0" x2="39.0" y2="23.0" stroke="#b01616" stroke-width="1.5" stroke-linecap="butt"/><line x1="39.0" y1="23.0" x2="44.5" y2="23.0" stroke="#cfc468" stroke-width="1.5" stroke-linecap="butt"/><line x1="30.9" y1="24.4" x2="38.8" y2="25.8" stroke="#b01616" stroke-width="1.5" stroke-linecap="butt"/><line x1="38.8" y1="25.8" x2="44.2" y2="26.7" stroke="#cfc468" stroke-width="1.5" stroke-linecap="butt"/><line x1="30.5" y1="25.7" x2="38.0" y2="28.5" stroke="#b01616" stroke-width="1.5" stroke-linecap="butt"/><line x1="38.0" y1="28.5" x2="43.2" y2="30.4" stroke="#cfc468" stroke-width="1.5" stroke-linecap="butt"/><line x1="29.9" y1="27.0" x2="36.9" y2="31.0" stroke="#b01616" stroke-width="1.5" stroke-linecap="butt"/><line x1="36.9" y1="31.0" x2="41.6" y2="33.8" stroke="#cfc468" stroke-width="1.5" stroke-linecap="butt"/><line x1="29.1" y1="28.1" x2="35.3" y2="33.3" stroke="#b01616" stroke-width="1.5" stroke-linecap="butt"/><line x1="35.3" y1="33.3" x2="39.5" y2="36.8" stroke="#cfc468" stroke-width="1.5" stroke-linecap="butt"/><line x1="28.1" y1="29.1" x2="33.3" y2="35.3" stroke="#b01616" stroke-width="1.5" stroke-linecap="butt"/><line x1="33.3" y1="35.3" x2="36.8" y2="39.5" stroke="#cfc468" stroke-width="1.5" stroke-linecap="butt"/><line x1="27.0" y1="29.9" x2="31.0" y2="36.9" stroke="#b01616" stroke-width="1.5" stroke-linecap="butt"/><line x1="31.0" y1="36.9" x2="33.8" y2="41.6" stroke="#cfc468" stroke-width="1.5" stroke-linecap="butt"/><line x1="25.7" y1="30.5" x2="28.5" y2="38.0" stroke="#b01616" stroke-width="1.5" stroke-linecap="butt"/><line x1="28.5" y1="38.0" x2="30.4" y2="43.2" stroke="#cfc468" stroke-width="1.5" stroke-linecap="butt"/><line x1="24.4" y1="30.9" x2="25.8" y2="38.8" stroke="#b01616" stroke-width="1.5" stroke-linecap="butt"/><line x1="25.8" y1="38.8" x2="26.7" y2="44.2" stroke="#cfc468" stroke-width="1.5" stroke-linecap="butt"/><line x1="23.0" y1="31.0" x2="23.0" y2="39.0" stroke="#b01616" stroke-width="1.5" stroke-linecap="butt"/><line x1="23.0" y1="39.0" x2="23.0" y2="44.5" stroke="#cfc468" stroke-width="1.5" stroke-linecap="butt"/><line x1="21.6" y1="30.9" x2="20.2" y2="38.8" stroke="#b01616" stroke-width="1.5" stroke-linecap="butt"/><line x1="20.2" y1="38.8" x2="19.3" y2="44.2" stroke="#cfc468" stroke-width="1.5" stroke-linecap="butt"/><line x1="20.3" y1="30.5" x2="17.5" y2="38.0" stroke="#b01616" stroke-width="1.5" stroke-linecap="butt"/><line x1="17.5" y1="38.0" x2="15.6" y2="43.2" stroke="#cfc468" stroke-width="1.5" stroke-linecap="butt"/><line x1="19.0" y1="29.9" x2="15.0" y2="36.9" stroke="#b01616" stroke-width="1.5" stroke-linecap="butt"/><line x1="15.0" y1="36.9" x2="12.3" y2="41.6" stroke="#cfc468" stroke-width="1.5" stroke-linecap="butt"/><line x1="17.9" y1="29.1" x2="12.7" y2="35.3" stroke="#b01616" stroke-width="1.5" stroke-linecap="butt"/><line x1="12.7" y1="35.3" x2="9.2" y2="39.5" stroke="#cfc468" stroke-width="1.5" stroke-linecap="butt"/><line x1="16.9" y1="28.1" x2="10.7" y2="33.3" stroke="#b01616" stroke-width="1.5" stroke-linecap="butt"/><line x1="10.7" y1="33.3" x2="6.5" y2="36.8" stroke="#cfc468" stroke-width="1.5" stroke-linecap="butt"/><line x1="16.1" y1="27.0" x2="9.1" y2="31.0" stroke="#b01616" stroke-width="1.5" stroke-linecap="butt"/><line x1="9.1" y1="31.0" x2="4.4" y2="33.8" stroke="#cfc468" stroke-width="1.5" stroke-linecap="butt"/><line x1="15.5" y1="25.7" x2="8.0" y2="28.5" stroke="#b01616" stroke-width="1.5" stroke-linecap="butt"/><line x1="8.0" y1="28.5" x2="2.8" y2="30.4" stroke="#cfc468" stroke-width="1.5" stroke-linecap="butt"/><line x1="15.1" y1="24.4" x2="7.2" y2="25.8" stroke="#b01616" stroke-width="1.5" stroke-linecap="butt"/><line x1="7.2" y1="25.8" x2="1.8" y2="26.7" stroke="#cfc468" stroke-width="1.5" stroke-linecap="butt"/><line x1="15.0" y1="23.0" x2="7.0" y2="23.0" stroke="#b01616" stroke-width="1.5" stroke-linecap="butt"/><line x1="7.0" y1="23.0" x2="1.5" y2="23.0" stroke="#cfc468" stroke-width="1.5" stroke-linecap="butt"/><line x1="15.1" y1="21.6" x2="7.2" y2="20.2" stroke="#b01616" stroke-width="1.5" stroke-linecap="butt"/><line x1="7.2" y1="20.2" x2="1.8" y2="19.3" stroke="#cfc468" stroke-width="1.5" stroke-linecap="butt"/><line x1="15.5" y1="20.3" x2="8.0" y2="17.5" stroke="#b01616" stroke-width="1.5" stroke-linecap="butt"/><line x1="8.0" y1="17.5" x2="2.8" y2="15.6" stroke="#cfc468" stroke-width="1.5" stroke-linecap="butt"/><line x1="16.1" y1="19.0" x2="9.1" y2="15.0" stroke="#b01616" stroke-width="1.5" stroke-linecap="butt"/><line x1="9.1" y1="15.0" x2="4.4" y2="12.2" stroke="#cfc468" stroke-width="1.5" stroke-linecap="butt"/><line x1="16.9" y1="17.9" x2="10.7" y2="12.7" stroke="#b01616" stroke-width="1.5" stroke-linecap="butt"/><line x1="10.7" y1="12.7" x2="6.5" y2="9.2" stroke="#cfc468" stroke-width="1.5" stroke-linecap="butt"/><line x1="17.9" y1="16.9" x2="12.7" y2="10.7" stroke="#b01616" stroke-width="1.5" stroke-linecap="butt"/><line x1="12.7" y1="10.7" x2="9.2" y2="6.5" stroke="#cfc468" stroke-width="1.5" stroke-linecap="butt"/><line x1="19.0" y1="16.1" x2="15.0" y2="9.1" stroke="#b01616" stroke-width="1.5" stroke-linecap="butt"/><line x1="15.0" y1="9.1" x2="12.2" y2="4.4" stroke="#cfc468" stroke-width="1.5" stroke-linecap="butt"/><line x1="20.3" y1="15.5" x2="17.5" y2="8.0" stroke="#b01616" stroke-width="1.5" stroke-linecap="butt"/><line x1="17.5" y1="8.0" x2="15.6" y2="2.8" stroke="#cfc468" stroke-width="1.5" stroke-linecap="butt"/><line x1="21.6" y1="15.1" x2="20.2" y2="7.2" stroke="#b01616" stroke-width="1.5" stroke-linecap="butt"/><line x1="20.2" y1="7.2" x2="19.3" y2="1.8" stroke="#cfc468" stroke-width="1.5" stroke-linecap="butt"/><line x1="23.0" y1="15.0" x2="23.0" y2="7.0" stroke="#b01616" stroke-width="1.5" stroke-linecap="butt"/><line x1="23.0" y1="7.0" x2="23.0" y2="1.5" stroke="#cfc468" stroke-width="1.5" stroke-linecap="butt"/><line x1="24.4" y1="15.1" x2="25.8" y2="7.2" stroke="#b01616" stroke-width="1.5" stroke-linecap="butt"/><line x1="25.8" y1="7.2" x2="26.7" y2="1.8" stroke="#cfc468" stroke-width="1.5" stroke-linecap="butt"/><line x1="25.7" y1="15.5" x2="28.5" y2="8.0" stroke="#b01616" stroke-width="1.5" stroke-linecap="butt"/><line x1="28.5" y1="8.0" x2="30.4" y2="2.8" stroke="#cfc468" stroke-width="1.5" stroke-linecap="butt"/><line x1="27.0" y1="16.1" x2="31.0" y2="9.1" stroke="#b01616" stroke-width="1.5" stroke-linecap="butt"/><line x1="31.0" y1="9.1" x2="33.7" y2="4.4" stroke="#cfc468" stroke-width="1.5" stroke-linecap="butt"/><line x1="28.1" y1="16.9" x2="33.3" y2="10.7" stroke="#b01616" stroke-width="1.5" stroke-linecap="butt"/><line x1="33.3" y1="10.7" x2="36.8" y2="6.5" stroke="#cfc468" stroke-width="1.5" stroke-linecap="butt"/><line x1="29.1" y1="17.9" x2="35.3" y2="12.7" stroke="#b01616" stroke-width="1.5" stroke-linecap="butt"/><line x1="35.3" y1="12.7" x2="39.5" y2="9.2" stroke="#cfc468" stroke-width="1.5" stroke-linecap="butt"/><line x1="29.9" y1="19.0" x2="36.9" y2="15.0" stroke="#b01616" stroke-width="1.5" stroke-linecap="butt"/><line x1="36.9" y1="15.0" x2="41.6" y2="12.3" stroke="#cfc468" stroke-width="1.5" stroke-linecap="butt"/><line x1="30.5" y1="20.3" x2="38.0" y2="17.5" stroke="#b01616" stroke-width="1.5" stroke-linecap="butt"/><line x1="38.0" y1="17.5" x2="43.2" y2="15.6" stroke="#cfc468" stroke-width="1.5" stroke-linecap="butt"/><line x1="30.9" y1="21.6" x2="38.8" y2="20.2" stroke="#b01616" stroke-width="1.5" stroke-linecap="butt"/><line x1="38.8" y1="20.2" x2="44.2" y2="19.3" stroke="#cfc468" stroke-width="1.5" stroke-linecap="butt"/><g fill="#101408" stroke="#24401a" stroke-width=".8"><circle cx="23" cy="17.500" r="5.600"/><circle cx="17.800" cy="26.500" r="5.600"/><circle cx="28.200" cy="26.500" r="5.600"/></g><circle cx="23" cy="23.500" r="5" fill="#101408"/><circle cx="23" cy="23.500" r="2.500" fill="#2a1430"/></svg>
<svg style="left:11px;top:624px" width="14" height="14" viewBox="0 0 14 14"><rect x=".5" y=".5" width="13" height="13" fill="#e4eaf4" stroke="#f8f8f8" stroke-width="1"/><path d="M2.800 12.800C2.600 8.600 4 6 6.800 4.800L5.200 2.800 11.800 2.200 10.800 8.800 9.200 6.800C7 7.800 5.800 9.800 6.200 12.800z" fill="#1a4698"/></svg>
<span class="t" id="t15" style="font-size:12px;color:#fff;top:641.80px;left:34px;transform:translateX(-50%) scaleX(0.814);text-shadow:0 1px 2px #000,0 0 3px #000;">LED 12X12</span>
<svg style="left:82px;top:592px" width="46" height="46" viewBox="0 0 46 46"><rect x="4.500" y="1.400" width="42" height="42.600" fill="#050505" stroke="#dcdcdc" stroke-width="1.100"/><g fill="none" stroke="#dcdcdc" stroke-width=".9"><rect x="0.500" y="5" width="4" height="5"/><rect x="0.500" y="14" width="4" height="5"/><rect x="0.500" y="24" width="4" height="5.500"/></g><g stroke="#fff" stroke-width="1.400" fill="none"><path d="M21.700 36V6.500"/><path d="M15.400 20v3.500q0 2 2 3.500l4.300 3.500"/><path d="M28.400 14v3q0 1.800-1.800 3.200l-4.900 4.300"/></g><path d="M21.700 3l2.500 4.800h-5z" fill="#fff"/><circle cx="21.700" cy="38.800" r="3.600" fill="#fff"/><circle cx="15.400" cy="18.200" r="2.400" fill="#fff"/><rect x="26.600" y="10.500" width="3.700" height="3.700" fill="#fff"/><circle cx="9.700" cy="6.600" r="2.300" fill="#fff"/></svg>
<svg style="left:82px;top:624px" width="14" height="14" viewBox="0 0 14 14"><rect x=".5" y=".5" width="13" height="13" fill="#e4eaf4" stroke="#f8f8f8" stroke-width="1"/><path d="M2.800 12.800C2.600 8.600 4 6 6.800 4.800L5.200 2.800 11.800 2.200 10.800 8.800 9.200 6.800C7 7.800 5.800 9.800 6.200 12.800z" fill="#1a4698"/></svg>
<span class="t" id="t16" style="font-size:12px;color:#fff;top:641.80px;left:103.5px;transform:translateX(-50%) scaleX(0.749);text-shadow:0 1px 2px #000,0 0 3px #000;">EP01</span>
<div style="left:118px;top:1px;width:1043px;height:681px;background:#07070b;border-radius:7px 7px 4px 4px;border:1px solid #b9bcbc;border-top-color:#e8e8e8;"></div>
<div style="left:120px;top:3px;width:1039px;height:23px;background:linear-gradient(115deg,#101014 0,#0a0a12 38%,#0c1818 50%,#0b0b1c 58%,#14100e 70%,#0a0a14 80%,#0d1a16 90%,#0a0a10 100%)"></div>
<div style="left:119px;top:24px;width:5px;height:651px;background:linear-gradient(180deg,#8c8c8c 0px,#868686 36px,#6e6e6e 61px,#5a6a7a 73px,#94b0ca 82px,#a6bacd 102px,#8898a6 123px,#3a3a3a 132px,#141414 151px,#3a2410 176px,#6a3c10 191px,#4a2a0c 211px,#1a120a 224px,#0c0c0c 238px,#2a2a10 274px,#4a4616 288px,#2a1414 311px,#0c0c0c 322px,#26261e 371px,#3c3c32 391px,#2a2a24 416px,#0c0c0c 422px,#141414 466px,#5a3a6a 472px,#8a4a9a 491px,#5a2a5a 511px,#0e0e0e 518px,#141414 566px,#2c2c2c 572px,#2c2c2c 610px,#0c0c0c 616px,#0a0a0a 652px)"></div>
<div style="left:1154px;top:24px;width:6px;height:651px;background:linear-gradient(180deg,#6a6a6a 0,#707070 56px,#858585 111px,#b4b4b4 148px,#c0c0c0 151px,#0a0a0a 153px,#060606 100%)"></div>
<div style="left:124px;top:6px;width:368px;height:16px;background:rgba(225,225,225,.66);filter:blur(4.5px);border-radius:8px"></div>
<div style="left:119px;top:3px;width:50px;height:23px;background:linear-gradient(90deg,rgba(170,170,170,.75),rgba(170,170,170,0));border-radius:6px 0 0 0"></div>
<svg style="left:125px;top:6px" width="16" height="16" viewBox="0 0 16 16"><circle cx="8" cy="8" r="6.800" fill="none" stroke="#8a2226" stroke-width="2.600" stroke-dasharray="1.300 .7"/><circle cx="8" cy="8" r="4.800" fill="#2a1c18"/><circle cx="8" cy="8" r="2.400" fill="#1c6a2c"/><circle cx="8" cy="8" r="1" fill="#39b653"/></svg>
<span class="t" id="t17" style="font-size:12px;color:#000;top:7.50px;left:145px;transform-origin:0 50%;transform:scaleX(0.862);">RGB Pixel LED(WS2812) Shadow Designer - EXTREME ELECTRONICS</span>
<div style="left:1059px;top:1px;width:97px;height:18px;border:1px solid #c9c9c9;border-top:none;border-radius:0 0 5px 5px;background:linear-gradient(#8a8a8e 0,#66666c 45%,#38383e 50%,#4a4a52 100%)"></div>
<div style="left:1085px;top:1px;width:1px;height:17px;background:#b5b5b5"></div>
<div style="left:1110px;top:1px;width:45px;height:17px;border-left:1px solid #d0b0a8;border-radius:0 0 4px 0;background:linear-gradient(#e0a090 0,#cf6a54 45%,#b5331a 50%,#c8492c 100%)"></div>
<div style="left:1068px;top:10px;width:10px;height:3px;background:#fff;box-shadow:0 0 1px #000"></div>
<div style="left:1093px;top:6px;width:10px;height:8px;border:2px solid #9a9a9e;background:transparent"></div>
<svg style="left:1127px;top:4px" width="12" height="11" viewBox="0 0 12 11"><path d="M2.5 2 9.5 9 M9.5 2 2.5 9" stroke="#4a1c14" stroke-width="4" stroke-linecap="square"/><path d="M2.5 2 9.5 9 M9.5 2 2.5 9" stroke="#fff" stroke-width="2.3" stroke-linecap="square"/></svg>
<div style="left:124px;top:26px;width:1032px;height:651px;background:#fff;border:1px solid #a9acac;border-top-color:#8e9090"></div>
<div style="left:125px;top:27px;width:1030px;height:1px;background:#343436"></div>
<div style="left:125px;top:28px;width:1029px;height:18px;background:linear-gradient(#ffffff 0,#fcfcfe 32%,#e6e6f4 44%,#dcdcf0 55%,#dde4f6 66%,#e2eaf9 88%,#eaf0fb 100%);border-bottom:1px solid #a4a4a8"></div>
<div style="left:125px;top:47px;width:1029px;height:1px;background:#b4b4b4"></div>
<span class="t" id="t18" style="font-size:12px;color:#000;top:31.50px;left:132px;transform-origin:0 50%;transform:scaleX(0.827);">File</span>
<span class="t" id="t19" style="font-size:12px;color:#000;top:31.50px;left:161px;transform-origin:0 50%;transform:scaleX(0.894);">Edit</span>
<span class="t" id="t20" style="font-size:12px;color:#000;top:31.50px;left:192.5px;transform-origin:0 50%;transform:scaleX(0.931);">Drawing</span>
<span class="t" id="t21" style="font-size:12px;color:#000;top:31.50px;left:247px;transform-origin:0 50%;transform:scaleX(0.967);">Auto Animate</span>
<span class="t" id="t22" style="font-size:12px;color:#000;top:31.50px;left:329.5px;transform-origin:0 50%;transform:scaleX(0.969);">Memory</span>
<div style="left:125px;top:654px;width:1029px;height:21px;background:#fdefed;border-top:1px solid #c2c2c2"></div>
<svg style="left:1141px;top:662px" width="12" height="12" viewBox="0 0 12 12" fill="#b8b0ae"><rect x="8" y="0" width="2" height="2"/><rect x="4" y="4" width="2" height="2"/><rect x="8" y="4" width="2" height="2"/><rect x="0" y="8" width="2" height="2"/><rect x="4" y="8" width="2" height="2"/><rect x="8" y="8" width="2" height="2"/></svg>
<svg style="left:146px;top:52px" width="28" height="30" viewBox="0 0 28 30"><defs><linearGradient id="gpg" x1="0" y1="0" x2="1" y2="1"><stop offset="0" stop-color="#f4f4f4"/><stop offset="1" stop-color="#d6d6d6"/></linearGradient><radialGradient id="gbl" cx=".4" cy=".3" r=".8"><stop offset="0" stop-color="#2f9fd8"/><stop offset="1" stop-color="#04507e"/></radialGradient></defs><rect x="1" y="0.5" width="20" height="27" rx="1.5" fill="url(#gpg)" stroke="#c9c9c9" stroke-width=".8"/><circle cx="18.5" cy="20" r="8" fill="url(#gbl)" stroke="#063a5c" stroke-width=".8"/><path d="M18.5 15.2v9.6M13.7 20h9.600" stroke="#fff" stroke-width="2.6"/></svg>
<span class="t" id="t23" style="font-size:12px;color:#000;top:84.00px;left:145.5px;transform-origin:0 50%;transform:scaleX(0.916);">New</span>
<svg style="left:208px;top:55px" width="31" height="24" viewBox="0 0 31 24"><defs><linearGradient id="gfo" x1="0" y1="0" x2="0" y2="1"><stop offset="0" stop-color="#fbe08a"/><stop offset="1" stop-color="#e0a21c"/></linearGradient><linearGradient id="gfb" x1="0" y1="0" x2="0" y2="1"><stop offset="0" stop-color="#e9b534"/><stop offset="1" stop-color="#c98a10"/></linearGradient></defs><path d="M1.5 21V3.5q0-2 2-2h7.5l3 3h12q2 0 2 2V21z" fill="url(#gfb)"/><path d="M0.8 22.5 3.5 9q.4-1.800 2.200-1.800H29q1.600 0 1.300 1.600L28 22.5z" fill="url(#gfo)" stroke="#d79b1e" stroke-width=".6"/></svg>
<span class="t" id="t24" style="font-size:12px;color:#000;top:84.00px;left:209.5px;transform-origin:0 50%;transform:scaleX(0.903);">Open</span>
<svg style="left:276px;top:53px" width="27" height="27" viewBox="0 0 27 27"><defs><linearGradient id="gfl" x1="0" y1="0" x2="0" y2="1"><stop offset="0" stop-color="#4a4a4a"/><stop offset="1" stop-color="#1c1c1c"/></linearGradient></defs><path d="M1 0.5h25v26H4l-3-3z" fill="url(#gfl)"/><rect x="5" y="1" width="17" height="11" fill="#e9edf7"/><path d="M5 4h17M5 6.5h17M5 9h17" stroke="#c2cbe0" stroke-width=".8"/><rect x="7" y="16" width="14" height="10" fill="#b9b9b9"/><rect x="9" y="17.5" width="4" height="7" fill="#2a2a2a"/></svg>
<span class="t" id="t25" style="font-size:12px;color:#000;top:84.00px;left:277px;transform-origin:0 50%;transform:scaleX(0.822);">Save</span>
<svg style="left:347px;top:51px" width="30" height="31" viewBox="0 0 30 31"><g fill="#fbfbfb" stroke="#d4d4d4" stroke-width=".9"><path d="M9 5.5h19.5v18l-6 6H9z"/><path d="M22.5 29.5v-6h6" fill="#ececec"/><path d="M1.5 1h20v19l-6 6h-14z"/><path d="M15.5 26v-6h6" fill="#e6e6e6"/></g></svg>
<span class="t" id="t26" style="font-size:12px;color:#000;top:84.00px;left:348.5px;transform-origin:0 50%;transform:scaleX(0.928);">Copy</span>
<svg style="left:414px;top:50px" width="27" height="31" viewBox="0 0 27 31"><defs><linearGradient id="gcb" x1="0" y1="0" x2="1" y2="1"><stop offset="0" stop-color="#e9c77a"/><stop offset="1" stop-color="#b98a3a"/></linearGradient></defs><rect x="0.5" y="3" width="21" height="25" rx="1.5" fill="url(#gcb)" stroke="#a87d33" stroke-width=".7"/><rect x="6" y="0.5" width="10" height="5" rx="1.2" fill="#8d8d8d" stroke="#5f5f5f" stroke-width=".6"/><path d="M9 9h12l5 5v16H9z" fill="#fbfbfb" stroke="#c8c8c8" stroke-width=".8"/><path d="M21 9v5h5" fill="#e4e4e4" stroke="#c8c8c8" stroke-width=".6"/><path d="M11.5 17h12M11.5 20h12M11.5 23h12M11.5 26h12" stroke="#d9d9d9" stroke-width=".9"/></svg>
<span class="t" id="t27" style="font-size:12px;color:#000;top:84.00px;left:414px;transform-origin:0 50%;transform:scaleX(0.864);">Paste</span>
<svg style="left:485px;top:51px" width="32" height="32" viewBox="0 0 32 32"><defs><radialGradient id="gpl" cx=".5" cy=".75" r=".75"><stop offset="0" stop-color="#7fdcff"/><stop offset=".55" stop-color="#1d9ce0"/><stop offset="1" stop-color="#0a5f9e"/></radialGradient></defs><circle cx="16" cy="16" r="14.6" fill="url(#gpl)" stroke="#0b2e4c" stroke-width="1.6"/><path d="M4 12a12.5 12.5 0 0 1 24 0q-12 5-24 0z" fill="#fff" opacity=".28"/><path d="M11.5 8.5 23.5 16 11.5 23.5z" fill="#fff"/></svg>
<span class="t" id="t28" style="font-size:12px;color:#000;top:84.00px;left:490px;transform-origin:0 50%;transform:scaleX(0.857);">Play</span>
<div style="left:534px;top:50px;width:66px;height:48px;border:1px solid #acacac;border-radius:3px;background:linear-gradient(#f3f3f3 0,#ededed 30%,#dcdcdc 31%,#dcdcdc 50%,#e9e9e9 51%,#ececec 100%);box-shadow:inset 0 0 0 1px #f9f9f9"></div>
<svg style="left:556px;top:55px" width="22" height="22" viewBox="0 0 22 22"><defs><radialGradient id="gst" cx=".5" cy=".8" r=".8"><stop offset="0" stop-color="#e02a1a"/><stop offset=".6" stop-color="#b00c0a"/><stop offset="1" stop-color="#8b0a0a"/></radialGradient></defs><circle cx="11" cy="11" r="10.5" fill="url(#gst)"/><path d="M1.2 11a9.800 9.800 0 0 1 19.600-1q-10-2-19.600 1z" fill="#d67070" opacity=".75"/></svg>
<span class="t" id="t29" style="font-size:12px;color:#000;top:84.00px;left:554.5px;transform-origin:0 50%;transform:scaleX(0.891);">Stop</span>
<div style="left:633px;top:54px;width:13px;height:12px;background:#00ee00"></div>
<div style="left:619px;top:67px;width:12px;height:12px;background:#ee1111"></div>
<svg style="left:618px;top:52px" width="30" height="28" viewBox="0 0 30 28"><path d="M3 24 15.500 14l-3.500-4.500L27.500 5 22.500 19.500l-3.200-3L5.500 27z" fill="#000"/></svg>
<span class="t" id="t30" style="font-size:12px;color:#000;top:84.00px;left:602.5px;transform-origin:0 50%;transform:scaleX(0.923);">Next Colour</span>
<div style="left:569px;top:92px;width:89px;height:18px;border:1px solid #767676;border-radius:3px;background:linear-gradient(#ffffff,#e6e8f2);box-shadow:1px 1px 2px rgba(0,0,0,.35)"></div>
<span class="t" id="t31" style="font-size:12px;color:#575757;top:94.50px;left:575px;transform-origin:0 50%;transform:scaleX(0.948);">Stop Animation</span>
<svg style="left:566px;top:76px" width="14" height="22" viewBox="0 0 14 22"><path d="M1 1v16.5l3.800-3.600 2.800 6.300 2.300-1-2.800-6.200h5.200z" fill="#fff" stroke="#000" stroke-width="1"/></svg>
<div class="gb" style="left:134px;top:119px;width:212px;height:52px;"></div>
<div style="left:141px;top:112px;width:77px;height:14px;background:#fff"></div>
<span class="t" id="t32" style="font-size:12px;color:#000;top:113.50px;left:142px;transform-origin:0 50%;transform:scaleX(0.958);">Drawing Tools</span>
<div class="btn" style="left:141px;top:133px;width:32px;height:32px;"></div>
<svg style="left:141px;top:133px" width="32" height="32" viewBox="0 0 32 32"><path d="M6 28.500 12 25 25 22.500z" fill="#b5b5b5" opacity=".75"/><path d="M6.200 28 8 22.500 20.500 5.500 23.300 7.500 10.800 24.800z" fill="#eea23a"/><path d="M8 22.500 20.500 5.500 21.600 6.300 9.200 23.400z" fill="#f9d28a"/><path d="M6.200 28 8 22.500 10.800 24.800z" fill="#e6d2aa"/><path d="M6.200 28 6.800 26.200 7.800 27z" fill="#333"/><path d="M20.500 5.500 21.600 4 24.400 6 23.300 7.500z" fill="#cfcfcf"/></svg>
<div class="btn" style="left:176px;top:133px;width:32px;height:32px;"></div>
<svg style="left:176px;top:133px" width="32" height="32" viewBox="0 0 32 32"><path d="M5.500 27.500 27.500 5.500" stroke="#2a2a2a" stroke-width="1.800"/></svg>
<div style="left:212px;top:133px;width:32px;height:32px;border:1px solid #3c7fb1;border-radius:3px;background:linear-gradient(#f0f4f6 0,#eaeef0 24%,#dfe4e6 25%,#dde2e4 50%,#d2d8db 51%,#cdd3d6 100%);box-shadow:inset 0 0 0 1px #46d0f6"></div>
<div style="left:215px;top:136px;width:26px;height:26px;border:1px dotted #222"></div>
<svg style="left:212px;top:133px" width="32" height="32" viewBox="0 0 32 32"><defs><linearGradient id="gbk" x1="0" y1="0" x2="1" y2="1"><stop offset="0" stop-color="#6a6a6a"/><stop offset=".3" stop-color="#f4f4f4"/><stop offset=".55" stop-color="#a0a0a0"/><stop offset=".8" stop-color="#ececec"/><stop offset="1" stop-color="#8a8a8a"/></linearGradient><linearGradient id="ggr" x1="0" y1="0" x2="1" y2="1"><stop offset="0" stop-color="#157a3a"/><stop offset=".5" stop-color="#2cc45c"/><stop offset="1" stop-color="#3fe070"/></linearGradient></defs><path d="M4 17 13 4.500 21.500 11 12.500 25z" fill="url(#gbk)" stroke="#7a7a7a" stroke-width=".5"/><ellipse cx="17.300" cy="7.800" rx="5.400" ry="2" transform="rotate(37 17.300 7.800)" fill="#2e2e2e"/><path d="M13.500 5q5 .5 9 5 4 4 5.500 10 1 5 0 8h-4.500q-.5-7-3.500-11-3-4-7.500-8z" fill="url(#ggr)" opacity=".92"/><path d="M5 27q6 1.500 11 0l-3-1.500z" fill="#a0a0a0" opacity=".6"/></svg>
<div class="gb" style="left:134px;top:188px;width:212px;height:371px;"></div>
<div style="left:141px;top:181px;width:72px;height:14px;background:#fff"></div>
<span class="t" id="t33" style="font-size:12px;color:#000;top:182.50px;left:142px;transform-origin:0 50%;transform:scaleX(0.916);">Drawing Area</span>
<svg style="left:139.0px;top:200.0px" width="203" height="203" viewBox="0 0 203 203" shape-rendering="crispEdges"><rect width="203" height="203" fill="#000"/><rect x="1" y="1" width="15" height="15" fill="#ffffff"/><rect x="18" y="1" width="15" height="15" fill="#ffffff"/><rect x="35" y="1" width="15" height="15" fill="#ffffff"/><rect x="52" y="1" width="14" height="15" fill="#ffffff"/><rect x="68" y="1" width="15" height="15" fill="#ffffff"/><rect x="85" y="1" width="15" height="15" fill="#ffffff"/><rect x="102" y="1" width="15" height="15" fill="#ffffff"/><rect x="119" y="1" width="15" height="15" fill="#ffffff"/><rect x="136" y="1" width="15" height="15" fill="#ffffff"/><rect x="153" y="1" width="15" height="15" fill="#00ee00"/><rect x="170" y="1" width="14" height="15" fill="#00ee00"/><rect x="186" y="1" width="15" height="15" fill="#ffffff"/><rect x="1" y="18" width="15" height="15" fill="#ffffff"/><rect x="18" y="18" width="15" height="15" fill="#ffffff"/><rect x="35" y="18" width="15" height="15" fill="#ffffff"/><rect x="52" y="18" width="14" height="15" fill="#ffffff"/><rect x="68" y="18" width="15" height="15" fill="#ffffff"/><rect x="85" y="18" width="15" height="15" fill="#ffffff"/><rect x="102" y="18" width="15" height="15" fill="#ffffff"/><rect x="119" y="18" width="15" height="15" fill="#ffffff"/><rect x="136" y="18" width="15" height="15" fill="#00ee00"/><rect x="153" y="18" width="15" height="15" fill="#2d2d2d"/><rect x="170" y="18" width="14" height="15" fill="#2d2d2d"/><rect x="186" y="18" width="15" height="15" fill="#00ee00"/><rect x="1" y="35" width="15" height="15" fill="#00ee00"/><rect x="18" y="35" width="15" height="15" fill="#00ee00"/><rect x="35" y="35" width="15" height="15" fill="#ffffff"/><rect x="52" y="35" width="14" height="15" fill="#ffffff"/><rect x="68" y="35" width="15" height="15" fill="#ffffff"/><rect x="85" y="35" width="15" height="15" fill="#ffffff"/><rect x="102" y="35" width="15" height="15" fill="#00ee00"/><rect x="119" y="35" width="15" height="15" fill="#00ee00"/><rect x="136" y="35" width="15" height="15" fill="#2d2d2d"/><rect x="153" y="35" width="15" height="15" fill="#2d2d2d"/><rect x="170" y="35" width="14" height="15" fill="#2d2d2d"/><rect x="186" y="35" width="15" height="15" fill="#2d2d2d"/><rect x="1" y="52" width="15" height="14" fill="#2d2d2d"/><rect x="18" y="52" width="15" height="14" fill="#2d2d2d"/><rect x="35" y="52" width="15" height="14" fill="#00ee00"/><rect x="52" y="52" width="14" height="14" fill="#ffffff"/><rect x="68" y="52" width="15" height="14" fill="#ffffff"/><rect x="85" y="52" width="15" height="14" fill="#00ee00"/><rect x="102" y="52" width="15" height="14" fill="#2d2d2d"/><rect x="119" y="52" width="15" height="14" fill="#2d2d2d"/><rect x="136" y="52" width="15" height="14" fill="#2d2d2d"/><rect x="153" y="52" width="15" height="14" fill="#2d2d2d"/><rect x="170" y="52" width="14" height="14" fill="#2d2d2d"/><rect x="186" y="52" width="15" height="14" fill="#2d2d2d"/><rect x="1" y="68" width="15" height="15" fill="#2d2d2d"/><rect x="18" y="68" width="15" height="15" fill="#2d2d2d"/><rect x="35" y="68" width="15" height="15" fill="#2d2d2d"/><rect x="52" y="68" width="14" height="15" fill="#00ee00"/><rect x="68" y="68" width="15" height="15" fill="#00ee00"/><rect x="85" y="68" width="15" height="15" fill="#2d2d2d"/><rect x="102" y="68" width="15" height="15" fill="#2d2d2d"/><rect x="119" y="68" width="15" height="15" fill="#2d2d2d"/><rect x="136" y="68" width="15" height="15" fill="#2d2d2d"/><rect x="153" y="68" width="15" height="15" fill="#2d2d2d"/><rect x="170" y="68" width="14" height="15" fill="#2d2d2d"/><rect x="186" y="68" width="15" height="15" fill="#2d2d2d"/><rect x="1" y="85" width="15" height="15" fill="#2d2d2d"/><rect x="18" y="85" width="15" height="15" fill="#2d2d2d"/><rect x="35" y="85" width="15" height="15" fill="#2d2d2d"/><rect x="52" y="85" width="14" height="15" fill="#2d2d2d"/><rect x="68" y="85" width="15" height="15" fill="#2d2d2d"/><rect x="85" y="85" width="15" height="15" fill="#2d2d2d"/><rect x="102" y="85" width="15" height="15" fill="#2d2d2d"/><rect x="119" y="85" width="15" height="15" fill="#2d2d2d"/><rect x="136" y="85" width="15" height="15" fill="#2d2d2d"/><rect x="153" y="85" width="15" height="15" fill="#2d2d2d"/><rect x="170" y="85" width="14" height="15" fill="#2d2d2d"/><rect x="186" y="85" width="15" height="15" fill="#2d2d2d"/><rect x="1" y="102" width="15" height="15" fill="#f40000"/><rect x="18" y="102" width="15" height="15" fill="#f40000"/><rect x="35" y="102" width="15" height="15" fill="#f40000"/><rect x="52" y="102" width="14" height="15" fill="#f40000"/><rect x="68" y="102" width="15" height="15" fill="#f40000"/><rect x="85" y="102" width="15" height="15" fill="#f40000"/><rect x="102" y="102" width="15" height="15" fill="#f40000"/><rect x="119" y="102" width="15" height="15" fill="#f40000"/><rect x="136" y="102" width="15" height="15" fill="#f40000"/><rect x="153" y="102" width="15" height="15" fill="#f40000"/><rect x="170" y="102" width="14" height="15" fill="#f40000"/><rect x="186" y="102" width="15" height="15" fill="#f40000"/><rect x="1" y="119" width="15" height="15" fill="#2d2d2d"/><rect x="18" y="119" width="15" height="15" fill="#2d2d2d"/><rect x="35" y="119" width="15" height="15" fill="#2d2d2d"/><rect x="52" y="119" width="14" height="15" fill="#2d2d2d"/><rect x="68" y="119" width="15" height="15" fill="#2d2d2d"/><rect x="85" y="119" width="15" height="15" fill="#2d2d2d"/><rect x="102" y="119" width="15" height="15" fill="#2d2d2d"/><rect x="119" y="119" width="15" height="15" fill="#2d2d2d"/><rect x="136" y="119" width="15" height="15" fill="#2d2d2d"/><rect x="153" y="119" width="15" height="15" fill="#2d2d2d"/><rect x="170" y="119" width="14" height="15" fill="#2d2d2d"/><rect x="186" y="119" width="15" height="15" fill="#2d2d2d"/><rect x="1" y="136" width="15" height="15" fill="#2d2d2d"/><rect x="18" y="136" width="15" height="15" fill="#2d2d2d"/><rect x="35" y="136" width="15" height="15" fill="#2d2d2d"/><rect x="52" y="136" width="14" height="15" fill="#2d2d2d"/><rect x="68" y="136" width="15" height="15" fill="#2d2d2d"/><rect x="85" y="136" width="15" height="15" fill="#2d2d2d"/><rect x="102" y="136" width="15" height="15" fill="#2d2d2d"/><rect x="119" y="136" width="15" height="15" fill="#ffff1e"/><rect x="136" y="136" width="15" height="15" fill="#ffff1e"/><rect x="153" y="136" width="15" height="15" fill="#2d2d2d"/><rect x="170" y="136" width="14" height="15" fill="#2d2d2d"/><rect x="186" y="136" width="15" height="15" fill="#2d2d2d"/><rect x="1" y="153" width="15" height="15" fill="#2d2d2d"/><rect x="18" y="153" width="15" height="15" fill="#2d2d2d"/><rect x="35" y="153" width="15" height="15" fill="#2d2d2d"/><rect x="52" y="153" width="14" height="15" fill="#2d2d2d"/><rect x="68" y="153" width="15" height="15" fill="#2d2d2d"/><rect x="85" y="153" width="15" height="15" fill="#ffff1e"/><rect x="102" y="153" width="15" height="15" fill="#ffff1e"/><rect x="119" y="153" width="15" height="15" fill="#00ee00"/><rect x="136" y="153" width="15" height="15" fill="#00ee00"/><rect x="153" y="153" width="15" height="15" fill="#ffff1e"/><rect x="170" y="153" width="14" height="15" fill="#ffff1e"/><rect x="186" y="153" width="15" height="15" fill="#2d2d2d"/><rect x="1" y="170" width="15" height="14" fill="#ffff1e"/><rect x="18" y="170" width="15" height="14" fill="#2d2d2d"/><rect x="35" y="170" width="15" height="14" fill="#2d2d2d"/><rect x="52" y="170" width="14" height="14" fill="#ffff1e"/><rect x="68" y="170" width="15" height="14" fill="#ffff1e"/><rect x="85" y="170" width="15" height="14" fill="#00ee00"/><rect x="102" y="170" width="15" height="14" fill="#00ee00"/><rect x="119" y="170" width="15" height="14" fill="#00ee00"/><rect x="136" y="170" width="15" height="14" fill="#00ee00"/><rect x="153" y="170" width="15" height="14" fill="#00ee00"/><rect x="170" y="170" width="14" height="14" fill="#00ee00"/><rect x="186" y="170" width="15" height="14" fill="#ffff1e"/><rect x="1" y="186" width="15" height="15" fill="#00ee00"/><rect x="18" y="186" width="15" height="15" fill="#ffff1e"/><rect x="35" y="186" width="15" height="15" fill="#ffff1e"/><rect x="52" y="186" width="14" height="15" fill="#00ee00"/><rect x="68" y="186" width="15" height="15" fill="#00ee00"/><rect x="85" y="186" width="15" height="15" fill="#00ee00"/><rect x="102" y="186" width="15" height="15" fill="#00ee00"/><rect x="119" y="186" width="15" height="15" fill="#00ee00"/><rect x="136" y="186" width="15" height="15" fill="#00ee00"/><rect x="153" y="186" width="15" height="15" fill="#00ee00"/><rect x="170" y="186" width="14" height="15" fill="#00ee00"/><rect x="186" y="186" width="15" height="15" fill="#00ee00"/></svg>
<div class="pal" style="left:139px;top:404.5px;width:43px;height:43px;"><i style="background:#000000"></i></div>
<div class="pal" style="left:184px;top:404.5px;width:43px;height:43px;"><i style="background:#ffffff"></i></div>
<div class="pal" style="left:229px;top:404.5px;width:43px;height:43px;"><i style="background:#ff0000"></i></div>
<div class="pal" style="left:274px;top:404.5px;width:43px;height:43px;"><i style="background:#00ff00"></i></div>
<div class="pal" style="left:139px;top:449.5px;width:43px;height:43px;"><i style="background:#0000ff"></i></div>
<div class="pal" style="left:184px;top:449.5px;width:43px;height:43px;"><i style="background:#ffff00"></i></div>
<div class="pal" style="left:229px;top:449.5px;width:43px;height:43px;"><i style="background:#00ffff"></i></div>
<div class="pal" style="left:274px;top:449.5px;width:43px;height:43px;"><i style="background:#ff00ff"></i></div>
<div class="pal" style="left:171px;top:496.5px;width:56px;height:56px;"><i style="background:#00ff00"></i></div>
<div class="pal" style="left:229px;top:496.5px;width:56px;height:56px;"><i style="background:#000000"></i></div>
<svg style="left:147px;top:587px" width="36" height="38" viewBox="0 0 36 38"><defs><linearGradient id="gch" x1="0" y1="0" x2="1" y2="1"><stop offset="0" stop-color="#6a6f78"/><stop offset=".42" stop-color="#4a4c52"/><stop offset=".44" stop-color="#1c1e24"/><stop offset="1" stop-color="#0c0d12"/></linearGradient></defs><g stroke="#a9a9a9" stroke-width=".9"><path d="M6.5 2.500v3M6.5 33.500v3.500"/><path d="M9.4 2.500v3M9.4 33.500v3.500"/><path d="M12.4 2.500v3M12.4 33.500v3.500"/><path d="M15.4 2.500v3M15.4 33.500v3.500"/><path d="M18.3 2.500v3M18.3 33.500v3.500"/><path d="M21.2 2.500v3M21.2 33.500v3.500"/><path d="M24.2 2.500v3M24.2 33.500v3.500"/><path d="M27.2 2.500v3M27.2 33.500v3.500"/><path d="M30.1 2.500v3M30.1 33.500v3.500"/></g><rect x="3.400" y="5" width="29.200" height="28.600" rx="1.800" fill="url(#gch)" stroke="#3f6ea8" stroke-width=".9"/><circle cx="6" cy="7.500" r=".9" fill="#c9ced6"/><path d="M11 10h15.500l-2.500 4.600h-7.500l-.6 3.400h7.200l-2.200 4.200h-5.700l-.6 3.200h8.500l-2.400 4.200H9z" fill="#3d9ce8"/><path d="M11 10h15.500L9.800 22z" fill="#9fd4ff" opacity=".6"/></svg>
<div style="left:180px;top:618px;width:136px;height:1px;background:#c9ccd2"></div>
<svg style="left:312px;top:614px" width="18" height="14" viewBox="0 0 18 14"><path d="M0 4.500h8l6 6" fill="none" stroke="#c3cbd6" stroke-width="1"/><circle cx="15" cy="11" r="1.600" fill="#fff" stroke="#a9bdd6" stroke-width="1"/></svg>
<span class="t" id="t34" style="font-size:10.7px;color:#1c1c1c;top:605.95px;font-weight:bold;left:181px;transform-origin:0 50%;transform:scaleX(0.840);">E</span>
<span class="t" id="t35" style="font-size:16px;color:#1c1c1c;top:601.60px;left:186.5px;transform-origin:0 50%;transform:scaleX(1.037);">Xtreme</span>
<span class="t" id="t36" style="font-size:16px;color:#111;top:601.60px;font-weight:bold;left:240.5px;transform-origin:0 50%;transform:scaleX(0.864);">Electronics</span>
<span class="t" id="t37" style="font-size:16px;color:#1c1c1c;top:613.80px;left:186.5px;transform-origin:0 50%;transform:scaleX(1.037) scaleY(-.62);opacity:.08;">Xtreme</span>
<span class="t" id="t38" style="font-size:16px;color:#111;top:613.80px;font-weight:bold;left:240.5px;transform-origin:0 50%;transform:scaleX(0.864) scaleY(-.62);opacity:.09;">Electronics</span>
<span class="t" id="t39" style="font-size:12px;color:#000;top:118.50px;left:355px;transform-origin:0 50%;transform:scaleX(0.876);">Frame 03</span>
<svg style="left:400px;top:108px" width="320" height="4" viewBox="0 0 320 4"><rect x="13.0" y="0" width="1" height="3" fill="#c4c4c4"/><rect x="39.8" y="0" width="1" height="3" fill="#c4c4c4"/><rect x="66.6" y="0" width="1" height="3" fill="#c4c4c4"/><rect x="93.4" y="0" width="1" height="3" fill="#c4c4c4"/><rect x="120.2" y="0" width="1" height="3" fill="#c4c4c4"/><rect x="147.0" y="0" width="1" height="3" fill="#c4c4c4"/><rect x="173.8" y="0" width="1" height="3" fill="#c4c4c4"/><rect x="200.6" y="0" width="1" height="3" fill="#c4c4c4"/><rect x="227.4" y="0" width="1" height="3" fill="#c4c4c4"/><rect x="254.2" y="0" width="1" height="3" fill="#c4c4c4"/><rect x="281.0" y="0" width="1" height="3" fill="#c4c4c4"/><rect x="307.8" y="0" width="1" height="3" fill="#c4c4c4"/></svg>
<div style="left:408px;top:118px;width:304px;height:11px;background:#e7eaea;border:1px solid #d6d6d6;border-top-color:#b0b0b0;border-left-color:#c2c2c2"></div>
<svg style="left:461px;top:113px" width="11" height="20" viewBox="0 0 11 20"><defs><linearGradient id="gth" x1="0" y1="0" x2="1" y2="0"><stop offset="0" stop-color="#f6f6f6"/><stop offset="1" stop-color="#cfcfcf"/></linearGradient></defs><path d="M1 5.500 5.500 .8 10 5.500V18q0 1-1 1H2q-1 0-1-1z" fill="url(#gth)" stroke="#8a8a8a" stroke-width="1"/></svg>
<span class="t" id="t40" style="font-size:12px;color:#000;top:118.50px;left:723.5px;transform-origin:0 50%;transform:scaleX(0.920);">Frame Count:</span>
<div class="num" style="left:802px;top:113.5px;width:39px;height:22px;"></div>
<span class="t" id="t41" style="font-size:12px;color:#000;top:119.00px;left:806.5px;transform-origin:0 50%;transform:scaleX(0.898);">12</span>
<div style="left:843.5px;top:113.5px;width:14px;height:11.0px;border:1px solid #c9ccd2;border-radius:2px;background:linear-gradient(#fbfbfb,#e6e8ee)"></div>
<svg style="left:847.5px;top:117.0px" width="6" height="4" viewBox="0 0 6 4"><path d="M.5 3.500 3 .5 5.500 3.500z" fill="#4d5c8c"/></svg>
<div style="left:843.5px;top:124.5px;width:14px;height:11.0px;border:1px solid #c9ccd2;border-radius:2px;background:linear-gradient(#fbfbfb,#e6e8ee)"></div>
<svg style="left:847.5px;top:128.0px" width="6" height="4" viewBox="0 0 6 4"><path d="M.5 .5h5L3 3.500z" fill="#4d5c8c"/></svg>
<div style="left:356px;top:146.5px;width:506px;height:506.0px;background:#121212;border:1px solid #000"></div>
<svg style="left:356px;top:146.5px" width="506" height="506.0" viewBox="356 146.5 506 506.0"><g fill="#000000"><circle cx="610.2" cy="254.7" r="6.5"/><circle cx="610.0" cy="281.0" r="6.5"/><circle cx="609.9" cy="294.1" r="6.5"/><circle cx="609.8" cy="307.3" r="6.5"/><circle cx="635.3" cy="257.0" r="6.5"/><circle cx="630.5" cy="282.9" r="6.5"/><circle cx="628.2" cy="295.8" r="6.5"/><circle cx="625.8" cy="308.8" r="6.5"/><circle cx="664.1" cy="251.4" r="6.5"/><circle cx="659.6" cy="263.7" r="6.5"/><circle cx="650.4" cy="288.4" r="6.5"/><circle cx="645.8" cy="300.7" r="6.5"/><circle cx="695.6" cy="251.8" r="6.5"/><circle cx="689.0" cy="263.2" r="6.5"/><circle cx="682.3" cy="274.5" r="6.5"/><circle cx="669.0" cy="297.2" r="6.5"/><circle cx="662.3" cy="308.5" r="6.5"/><circle cx="719.9" cy="269.1" r="6.5"/><circle cx="711.3" cy="279.1" r="6.5"/><circle cx="702.8" cy="289.1" r="6.5"/><circle cx="685.8" cy="309.1" r="6.5"/><circle cx="750.9" cy="281.9" r="6.5"/><circle cx="740.8" cy="290.3" r="6.5"/><circle cx="730.6" cy="298.6" r="6.5"/><circle cx="720.5" cy="307.0" r="6.5"/><circle cx="700.2" cy="323.8" r="6.5"/><circle cx="780.5" cy="301.8" r="6.5"/><circle cx="769.1" cy="308.3" r="6.5"/><circle cx="757.7" cy="314.8" r="6.5"/><circle cx="746.2" cy="321.3" r="6.5"/><circle cx="734.8" cy="327.8" r="6.5"/><circle cx="711.9" cy="340.7" r="6.5"/><circle cx="700.5" cy="347.2" r="6.5"/><circle cx="794.8" cy="333.0" r="6.5"/><circle cx="782.4" cy="337.4" r="6.5"/><circle cx="770.1" cy="341.8" r="6.5"/><circle cx="757.7" cy="346.2" r="6.5"/><circle cx="745.3" cy="350.6" r="6.5"/><circle cx="720.5" cy="359.5" r="6.5"/><circle cx="708.1" cy="363.9" r="6.5"/><circle cx="790.5" cy="368.4" r="6.5"/><circle cx="777.6" cy="370.6" r="6.5"/><circle cx="764.6" cy="372.8" r="6.5"/><circle cx="751.6" cy="375.0" r="6.5"/><circle cx="725.7" cy="379.4" r="6.5"/><circle cx="712.7" cy="381.6" r="6.5"/><circle cx="699.8" cy="383.8" r="6.5"/><circle cx="779.9" cy="400.3" r="6.5"/><circle cx="766.8" cy="400.2" r="6.5"/><circle cx="753.6" cy="400.1" r="6.5"/><circle cx="727.3" cy="399.9" r="6.5"/><circle cx="714.2" cy="399.8" r="6.5"/><circle cx="701.0" cy="399.7" r="6.5"/><circle cx="777.1" cy="429.9" r="6.5"/><circle cx="764.2" cy="427.5" r="6.5"/><circle cx="751.3" cy="425.2" r="6.5"/><circle cx="725.4" cy="420.4" r="6.5"/><circle cx="712.5" cy="418.1" r="6.5"/><circle cx="699.5" cy="415.7" r="6.5"/><circle cx="686.6" cy="413.3" r="6.5"/><circle cx="756.9" cy="454.0" r="6.5"/><circle cx="744.6" cy="449.5" r="6.5"/><circle cx="719.9" cy="440.3" r="6.5"/><circle cx="707.6" cy="435.7" r="6.5"/><circle cx="695.3" cy="431.1" r="6.5"/><circle cx="683.0" cy="426.5" r="6.5"/><circle cx="733.8" cy="472.2" r="6.5"/><circle cx="711.1" cy="458.9" r="6.5"/><circle cx="699.8" cy="452.2" r="6.5"/><circle cx="688.4" cy="445.6" r="6.5"/><circle cx="719.2" cy="492.7" r="6.5"/><circle cx="699.2" cy="475.7" r="6.5"/><circle cx="689.2" cy="467.2" r="6.5"/><circle cx="679.1" cy="458.6" r="6.5"/><circle cx="709.7" cy="520.5" r="6.5"/><circle cx="701.3" cy="510.4" r="6.5"/><circle cx="684.5" cy="490.1" r="6.5"/><circle cx="676.1" cy="480.0" r="6.5"/><circle cx="693.5" cy="547.6" r="6.5"/><circle cx="687.0" cy="536.1" r="6.5"/><circle cx="680.5" cy="524.7" r="6.5"/><circle cx="667.6" cy="501.8" r="6.5"/><circle cx="661.1" cy="490.4" r="6.5"/><circle cx="666.5" cy="560.0" r="6.5"/><circle cx="662.1" cy="547.6" r="6.5"/><circle cx="657.7" cy="535.2" r="6.5"/><circle cx="648.8" cy="510.4" r="6.5"/><circle cx="639.9" cy="580.4" r="6.5"/><circle cx="637.7" cy="567.5" r="6.5"/><circle cx="635.5" cy="554.5" r="6.5"/><circle cx="633.3" cy="541.5" r="6.5"/><circle cx="628.9" cy="515.6" r="6.5"/><circle cx="607.8" cy="596.1" r="6.5"/><circle cx="607.9" cy="583.0" r="6.5"/><circle cx="608.0" cy="569.8" r="6.5"/><circle cx="608.1" cy="556.7" r="6.5"/><circle cx="608.2" cy="543.5" r="6.5"/><circle cx="608.4" cy="517.2" r="6.5"/><circle cx="608.5" cy="504.1" r="6.5"/><circle cx="573.6" cy="592.9" r="6.5"/><circle cx="576.0" cy="580.0" r="6.5"/><circle cx="578.4" cy="567.0" r="6.5"/><circle cx="580.8" cy="554.1" r="6.5"/><circle cx="583.1" cy="541.2" r="6.5"/><circle cx="587.9" cy="515.3" r="6.5"/><circle cx="590.2" cy="502.4" r="6.5"/><circle cx="545.1" cy="571.5" r="6.5"/><circle cx="549.7" cy="559.1" r="6.5"/><circle cx="554.3" cy="546.8" r="6.5"/><circle cx="558.8" cy="534.5" r="6.5"/><circle cx="568.0" cy="509.8" r="6.5"/><circle cx="572.6" cy="497.5" r="6.5"/><circle cx="577.2" cy="485.2" r="6.5"/><circle cx="522.8" cy="546.4" r="6.5"/><circle cx="529.4" cy="535.0" r="6.5"/><circle cx="536.1" cy="523.7" r="6.5"/><circle cx="549.4" cy="501.0" r="6.5"/><circle cx="556.1" cy="489.7" r="6.5"/><circle cx="562.7" cy="478.3" r="6.5"/><circle cx="498.5" cy="529.1" r="6.5"/><circle cx="507.1" cy="519.1" r="6.5"/><circle cx="515.6" cy="509.1" r="6.5"/><circle cx="532.6" cy="489.1" r="6.5"/><circle cx="541.1" cy="479.1" r="6.5"/><circle cx="549.7" cy="469.0" r="6.5"/><circle cx="558.2" cy="459.0" r="6.5"/><circle cx="487.8" cy="499.6" r="6.5"/><circle cx="497.9" cy="491.2" r="6.5"/><circle cx="518.2" cy="474.4" r="6.5"/><circle cx="528.3" cy="466.0" r="6.5"/><circle cx="538.4" cy="457.6" r="6.5"/><circle cx="548.6" cy="449.3" r="6.5"/><circle cx="483.6" cy="470.4" r="6.5"/><circle cx="506.5" cy="457.5" r="6.5"/><circle cx="517.9" cy="451.0" r="6.5"/><circle cx="529.3" cy="444.5" r="6.5"/><circle cx="473.1" cy="447.6" r="6.5"/><circle cx="497.9" cy="438.7" r="6.5"/><circle cx="510.3" cy="434.3" r="6.5"/><circle cx="522.7" cy="429.9" r="6.5"/><circle cx="453.8" cy="425.4" r="6.5"/><circle cx="466.8" cy="423.2" r="6.5"/><circle cx="492.7" cy="418.8" r="6.5"/><circle cx="505.7" cy="416.6" r="6.5"/><circle cx="438.5" cy="397.9" r="6.5"/><circle cx="451.6" cy="398.0" r="6.5"/><circle cx="464.8" cy="398.1" r="6.5"/><circle cx="491.1" cy="398.3" r="6.5"/><circle cx="504.2" cy="398.4" r="6.5"/><circle cx="441.3" cy="368.3" r="6.5"/><circle cx="454.2" cy="370.7" r="6.5"/><circle cx="467.1" cy="373.0" r="6.5"/><circle cx="493.0" cy="377.8" r="6.5"/><circle cx="436.8" cy="335.0" r="6.5"/><circle cx="449.2" cy="339.6" r="6.5"/><circle cx="461.5" cy="344.2" r="6.5"/><circle cx="473.8" cy="348.7" r="6.5"/><circle cx="498.5" cy="357.9" r="6.5"/><circle cx="439.2" cy="299.4" r="6.5"/><circle cx="450.6" cy="306.0" r="6.5"/><circle cx="461.9" cy="312.7" r="6.5"/><circle cx="473.3" cy="319.3" r="6.5"/><circle cx="484.6" cy="326.0" r="6.5"/><circle cx="507.3" cy="339.3" r="6.5"/><circle cx="518.6" cy="346.0" r="6.5"/><circle cx="459.1" cy="271.4" r="6.5"/><circle cx="469.2" cy="279.9" r="6.5"/><circle cx="479.2" cy="288.4" r="6.5"/><circle cx="489.2" cy="297.0" r="6.5"/><circle cx="499.2" cy="305.5" r="6.5"/><circle cx="519.2" cy="322.5" r="6.5"/><circle cx="529.2" cy="331.0" r="6.5"/><circle cx="492.0" cy="257.4" r="6.5"/><circle cx="500.4" cy="267.5" r="6.5"/><circle cx="508.7" cy="277.7" r="6.5"/><circle cx="517.1" cy="287.8" r="6.5"/><circle cx="533.9" cy="308.1" r="6.5"/><circle cx="542.3" cy="318.2" r="6.5"/><circle cx="550.7" cy="328.3" r="6.5"/><circle cx="524.9" cy="250.6" r="6.5"/><circle cx="531.4" cy="262.1" r="6.5"/><circle cx="537.9" cy="273.5" r="6.5"/><circle cx="550.8" cy="296.4" r="6.5"/><circle cx="557.3" cy="307.8" r="6.5"/><circle cx="563.8" cy="319.2" r="6.5"/><circle cx="551.9" cy="238.2" r="6.5"/><circle cx="556.3" cy="250.6" r="6.5"/><circle cx="560.7" cy="263.0" r="6.5"/><circle cx="569.6" cy="287.8" r="6.5"/><circle cx="574.0" cy="300.2" r="6.5"/><circle cx="578.4" cy="312.6" r="6.5"/><circle cx="582.8" cy="325.0" r="6.5"/><circle cx="582.9" cy="243.7" r="6.5"/><circle cx="585.1" cy="256.7" r="6.5"/><circle cx="589.5" cy="282.6" r="6.5"/><circle cx="591.7" cy="295.6" r="6.5"/><circle cx="593.9" cy="308.5" r="6.5"/><circle cx="596.1" cy="321.5" r="6.5"/></g><g fill="#f40000"><circle cx="610.1" cy="267.8" r="6.5"/><circle cx="632.9" cy="270.0" r="6.5"/><circle cx="655.0" cy="276.0" r="6.5"/><circle cx="675.6" cy="285.9" r="6.5"/><circle cx="694.3" cy="299.1" r="6.5"/><circle cx="710.4" cy="315.4" r="6.5"/><circle cx="723.4" cy="334.2" r="6.5"/><circle cx="732.9" cy="355.1" r="6.5"/><circle cx="738.7" cy="377.2" r="6.5"/><circle cx="740.5" cy="400.0" r="6.5"/><circle cx="738.3" cy="422.8" r="6.5"/><circle cx="732.3" cy="444.9" r="6.5"/><circle cx="722.4" cy="465.5" r="6.5"/><circle cx="709.2" cy="484.2" r="6.5"/><circle cx="692.9" cy="500.3" r="6.5"/><circle cx="674.1" cy="513.3" r="6.5"/><circle cx="653.2" cy="522.8" r="6.5"/><circle cx="631.1" cy="528.6" r="6.5"/><circle cx="608.3" cy="530.4" r="6.5"/><circle cx="585.5" cy="528.2" r="6.5"/><circle cx="563.4" cy="522.2" r="6.5"/><circle cx="542.8" cy="512.3" r="6.5"/><circle cx="524.1" cy="499.1" r="6.5"/><circle cx="508.0" cy="482.8" r="6.5"/><circle cx="495.0" cy="464.0" r="6.5"/><circle cx="485.5" cy="443.1" r="6.5"/><circle cx="479.7" cy="421.0" r="6.5"/><circle cx="477.9" cy="398.2" r="6.5"/><circle cx="480.1" cy="375.4" r="6.5"/><circle cx="486.1" cy="353.3" r="6.5"/><circle cx="496.0" cy="332.7" r="6.5"/><circle cx="509.2" cy="314.0" r="6.5"/><circle cx="525.5" cy="297.9" r="6.5"/><circle cx="544.3" cy="284.9" r="6.5"/><circle cx="565.2" cy="275.4" r="6.5"/><circle cx="587.3" cy="269.6" r="6.5"/></g><g fill="#ffff1e"><circle cx="609.7" cy="320.4" r="6.5"/><circle cx="623.4" cy="321.7" r="6.5"/><circle cx="641.2" cy="313.0" r="6.5"/><circle cx="655.7" cy="319.9" r="6.5"/><circle cx="677.3" cy="319.1" r="6.5"/><circle cx="690.1" cy="332.2" r="6.5"/><circle cx="689.1" cy="353.7" r="6.5"/><circle cx="695.7" cy="368.3" r="6.5"/><circle cx="686.8" cy="386.0" r="6.5"/><circle cx="687.9" cy="399.6" r="6.5"/><circle cx="673.7" cy="410.9" r="6.5"/><circle cx="670.6" cy="421.9" r="6.5"/><circle cx="677.1" cy="438.9" r="6.5"/><circle cx="669.1" cy="450.1" r="6.5"/><circle cx="667.7" cy="469.9" r="6.5"/><circle cx="654.6" cy="479.0" r="6.5"/><circle cx="644.4" cy="498.0" r="6.5"/><circle cx="626.7" cy="502.6" r="6.5"/><circle cx="608.6" cy="490.9" r="6.5"/><circle cx="592.6" cy="489.4" r="6.5"/><circle cx="581.8" cy="472.9" r="6.5"/><circle cx="569.4" cy="467.0" r="6.5"/><circle cx="566.7" cy="449.0" r="6.5"/><circle cx="558.7" cy="440.9" r="6.5"/><circle cx="540.8" cy="438.0" r="6.5"/><circle cx="535.1" cy="425.5" r="6.5"/><circle cx="518.6" cy="414.4" r="6.5"/><circle cx="517.4" cy="398.5" r="6.5"/><circle cx="505.9" cy="380.1" r="6.5"/><circle cx="510.8" cy="362.5" r="6.5"/><circle cx="530.0" cy="352.6" r="6.5"/><circle cx="539.3" cy="339.6" r="6.5"/><circle cx="559.0" cy="338.5" r="6.5"/><circle cx="570.3" cy="330.7" r="6.5"/><circle cx="587.2" cy="337.3" r="6.5"/><circle cx="598.3" cy="334.5" r="6.5"/></g><g fill="#00f400"><circle cx="610.3" cy="241.5" r="6.5"/><circle cx="609.7" cy="333.6" r="6.5"/><circle cx="637.6" cy="244.1" r="6.5"/><circle cx="621.0" cy="334.6" r="6.5"/><circle cx="668.7" cy="239.1" r="6.5"/><circle cx="636.6" cy="325.3" r="6.5"/><circle cx="632.0" cy="337.7" r="6.5"/><circle cx="702.3" cy="240.5" r="6.5"/><circle cx="649.0" cy="331.2" r="6.5"/><circle cx="642.4" cy="342.6" r="6.5"/><circle cx="728.4" cy="259.1" r="6.5"/><circle cx="668.7" cy="329.2" r="6.5"/><circle cx="660.2" cy="339.2" r="6.5"/><circle cx="651.7" cy="349.2" r="6.5"/><circle cx="761.0" cy="273.5" r="6.5"/><circle cx="680.0" cy="340.6" r="6.5"/><circle cx="669.8" cy="348.9" r="6.5"/><circle cx="659.7" cy="357.3" r="6.5"/><circle cx="792.0" cy="295.3" r="6.5"/><circle cx="677.6" cy="360.2" r="6.5"/><circle cx="666.2" cy="366.7" r="6.5"/><circle cx="807.2" cy="328.6" r="6.5"/><circle cx="683.3" cy="372.7" r="6.5"/><circle cx="671.0" cy="377.1" r="6.5"/><circle cx="803.5" cy="366.2" r="6.5"/><circle cx="673.8" cy="388.2" r="6.5"/><circle cx="793.1" cy="400.4" r="6.5"/><circle cx="674.7" cy="399.6" r="6.5"/><circle cx="790.1" cy="432.3" r="6.5"/><circle cx="769.2" cy="458.6" r="6.5"/><circle cx="745.1" cy="478.9" r="6.5"/><circle cx="665.7" cy="432.3" r="6.5"/><circle cx="729.2" cy="501.2" r="6.5"/><circle cx="659.1" cy="441.6" r="6.5"/><circle cx="718.0" cy="530.7" r="6.5"/><circle cx="659.4" cy="459.7" r="6.5"/><circle cx="651.0" cy="449.6" r="6.5"/><circle cx="700.0" cy="559.0" r="6.5"/><circle cx="648.1" cy="467.5" r="6.5"/><circle cx="641.6" cy="456.1" r="6.5"/><circle cx="670.9" cy="572.3" r="6.5"/><circle cx="640.0" cy="485.6" r="6.5"/><circle cx="635.6" cy="473.2" r="6.5"/><circle cx="631.2" cy="460.9" r="6.5"/><circle cx="642.1" cy="593.4" r="6.5"/><circle cx="624.5" cy="489.7" r="6.5"/><circle cx="622.3" cy="476.7" r="6.5"/><circle cx="620.1" cy="463.7" r="6.5"/><circle cx="607.7" cy="609.3" r="6.5"/><circle cx="608.7" cy="477.8" r="6.5"/><circle cx="608.7" cy="464.6" r="6.5"/><circle cx="571.3" cy="605.8" r="6.5"/><circle cx="595.0" cy="476.5" r="6.5"/><circle cx="597.4" cy="463.6" r="6.5"/><circle cx="540.5" cy="583.8" r="6.5"/><circle cx="586.4" cy="460.5" r="6.5"/><circle cx="516.1" cy="557.7" r="6.5"/><circle cx="576.0" cy="455.6" r="6.5"/><circle cx="490.0" cy="539.1" r="6.5"/><circle cx="477.6" cy="507.9" r="6.5"/><circle cx="472.2" cy="476.9" r="6.5"/><circle cx="552.2" cy="431.5" r="6.5"/><circle cx="460.7" cy="452.0" r="6.5"/><circle cx="547.4" cy="421.1" r="6.5"/><circle cx="440.8" cy="427.6" r="6.5"/><circle cx="531.6" cy="412.2" r="6.5"/><circle cx="544.6" cy="410.0" r="6.5"/><circle cx="425.3" cy="397.8" r="6.5"/><circle cx="530.5" cy="398.6" r="6.5"/><circle cx="543.7" cy="398.6" r="6.5"/><circle cx="428.3" cy="365.9" r="6.5"/><circle cx="518.9" cy="382.5" r="6.5"/><circle cx="531.8" cy="384.9" r="6.5"/><circle cx="544.7" cy="387.3" r="6.5"/><circle cx="424.5" cy="330.4" r="6.5"/><circle cx="523.1" cy="367.1" r="6.5"/><circle cx="535.4" cy="371.7" r="6.5"/><circle cx="547.8" cy="376.3" r="6.5"/><circle cx="427.9" cy="292.7" r="6.5"/><circle cx="541.3" cy="359.3" r="6.5"/><circle cx="552.7" cy="365.9" r="6.5"/><circle cx="449.1" cy="262.9" r="6.5"/><circle cx="549.3" cy="348.1" r="6.5"/><circle cx="559.3" cy="356.6" r="6.5"/><circle cx="483.6" cy="247.3" r="6.5"/><circle cx="567.4" cy="348.6" r="6.5"/><circle cx="518.4" cy="239.2" r="6.5"/><circle cx="576.8" cy="342.1" r="6.5"/><circle cx="547.5" cy="225.9" r="6.5"/><circle cx="580.7" cy="230.7" r="6.5"/></g><g fill="#ffffff"><circle cx="610.7" cy="188.9" r="6.5"/><circle cx="610.6" cy="202.1" r="6.5"/><circle cx="610.5" cy="215.2" r="6.5"/><circle cx="610.4" cy="228.4" r="6.5"/><circle cx="647.1" cy="192.4" r="6.5"/><circle cx="644.8" cy="205.3" r="6.5"/><circle cx="642.4" cy="218.2" r="6.5"/><circle cx="640.0" cy="231.2" r="6.5"/><circle cx="682.5" cy="202.1" r="6.5"/><circle cx="677.9" cy="214.4" r="6.5"/><circle cx="673.3" cy="226.7" r="6.5"/><circle cx="715.6" cy="217.8" r="6.5"/><circle cx="708.9" cy="229.1" r="6.5"/><circle cx="745.4" cy="239.0" r="6.5"/><circle cx="736.9" cy="249.0" r="6.5"/><circle cx="771.2" cy="265.1" r="6.5"/><circle cx="816.5" cy="364.0" r="6.5"/><circle cx="819.4" cy="400.6" r="6.5"/><circle cx="806.2" cy="400.5" r="6.5"/><circle cx="815.9" cy="437.0" r="6.5"/><circle cx="803.0" cy="434.7" r="6.5"/><circle cx="806.2" cy="472.4" r="6.5"/><circle cx="793.9" cy="467.8" r="6.5"/><circle cx="781.6" cy="463.2" r="6.5"/><circle cx="790.5" cy="505.5" r="6.5"/><circle cx="779.2" cy="498.8" r="6.5"/><circle cx="767.8" cy="492.2" r="6.5"/><circle cx="756.5" cy="485.5" r="6.5"/><circle cx="769.3" cy="535.3" r="6.5"/><circle cx="759.3" cy="526.8" r="6.5"/><circle cx="749.2" cy="518.3" r="6.5"/><circle cx="739.2" cy="509.8" r="6.5"/><circle cx="743.2" cy="561.1" r="6.5"/><circle cx="734.8" cy="550.9" r="6.5"/><circle cx="726.4" cy="540.8" r="6.5"/><circle cx="713.0" cy="581.9" r="6.5"/><circle cx="706.5" cy="570.4" r="6.5"/><circle cx="679.7" cy="597.1" r="6.5"/><circle cx="675.3" cy="584.7" r="6.5"/><circle cx="644.3" cy="606.4" r="6.5"/><circle cx="535.9" cy="596.1" r="6.5"/><circle cx="502.8" cy="580.4" r="6.5"/><circle cx="509.5" cy="569.1" r="6.5"/><circle cx="473.0" cy="559.2" r="6.5"/><circle cx="481.5" cy="549.2" r="6.5"/><circle cx="447.2" cy="533.1" r="6.5"/><circle cx="457.4" cy="524.7" r="6.5"/><circle cx="467.5" cy="516.3" r="6.5"/><circle cx="426.4" cy="502.9" r="6.5"/><circle cx="437.9" cy="496.4" r="6.5"/><circle cx="449.3" cy="489.9" r="6.5"/><circle cx="460.7" cy="483.4" r="6.5"/><circle cx="411.2" cy="469.6" r="6.5"/><circle cx="423.6" cy="465.2" r="6.5"/><circle cx="436.0" cy="460.8" r="6.5"/><circle cx="448.3" cy="456.4" r="6.5"/><circle cx="401.9" cy="434.2" r="6.5"/><circle cx="414.9" cy="432.0" r="6.5"/><circle cx="427.9" cy="429.8" r="6.5"/><circle cx="399.0" cy="397.6" r="6.5"/><circle cx="412.2" cy="397.7" r="6.5"/><circle cx="402.5" cy="361.2" r="6.5"/><circle cx="415.4" cy="363.5" r="6.5"/><circle cx="412.2" cy="325.8" r="6.5"/><circle cx="475.2" cy="237.1" r="6.5"/><circle cx="505.4" cy="216.3" r="6.5"/><circle cx="511.9" cy="227.8" r="6.5"/><circle cx="538.7" cy="201.1" r="6.5"/><circle cx="543.1" cy="213.5" r="6.5"/><circle cx="574.1" cy="191.8" r="6.5"/><circle cx="576.3" cy="204.8" r="6.5"/><circle cx="578.5" cy="217.8" r="6.5"/></g><text x="609.2" y="403.3" text-anchor="middle" font-family='"Liberation Sans", sans-serif' font-size="11.500" fill="#e01818">eXtreme</text></svg>
<div class="gb" style="left:872px;top:110px;width:272px;height:47px;"></div>
<div style="left:879px;top:103px;width:90.5px;height:14px;background:#fff"></div>
<span class="t" id="t42" style="font-size:12px;color:#000;top:104.50px;left:880px;transform-origin:0 50%;transform:scaleX(0.896);">Design Properties</span>
<span class="t" id="t43" style="font-size:12px;color:#000;top:131.00px;left:880px;transform-origin:0 50%;transform:scaleX(0.854);">Speed:</span>
<div class="num" style="left:923px;top:127px;width:30px;height:22px;"></div>
<span class="t" id="t44" style="font-size:12px;color:#000;top:132.50px;left:929.5px;transform-origin:0 50%;transform:scaleX(0.822);">5</span>
<div style="left:955.5px;top:127.0px;width:14px;height:11.0px;border:1px solid #c9ccd2;border-radius:2px;background:linear-gradient(#fbfbfb,#e6e8ee)"></div>
<svg style="left:959.5px;top:130.5px" width="6" height="4" viewBox="0 0 6 4"><path d="M.5 3.500 3 .5 5.500 3.500z" fill="#4d5c8c"/></svg>
<div style="left:955.5px;top:138.0px;width:14px;height:11.0px;border:1px solid #c9ccd2;border-radius:2px;background:linear-gradient(#fbfbfb,#e6e8ee)"></div>
<svg style="left:959.5px;top:141.5px" width="6" height="4" viewBox="0 0 6 4"><path d="M.5 .5h5L3 3.500z" fill="#4d5c8c"/></svg>
<span class="t" id="t45" style="font-size:12px;color:#000;top:131.00px;left:979px;transform-origin:0 50%;transform:scaleX(0.891);">Repeatations:</span>
<div class="num" style="left:1056px;top:127px;width:30px;height:22px;"></div>
<span class="t" id="t46" style="font-size:12px;color:#000;top:132.50px;left:1061px;transform-origin:0 50%;transform:scaleX(0.861);">10</span>
<div style="left:1088.5px;top:127.0px;width:14px;height:11.0px;border:1px solid #c9ccd2;border-radius:2px;background:linear-gradient(#fbfbfb,#e6e8ee)"></div>
<svg style="left:1092.5px;top:130.5px" width="6" height="4" viewBox="0 0 6 4"><path d="M.5 3.500 3 .5 5.500 3.500z" fill="#4d5c8c"/></svg>
<div style="left:1088.5px;top:138.0px;width:14px;height:11.0px;border:1px solid #c9ccd2;border-radius:2px;background:linear-gradient(#fbfbfb,#e6e8ee)"></div>
<svg style="left:1092.5px;top:141.5px" width="6" height="4" viewBox="0 0 6 4"><path d="M.5 .5h5L3 3.500z" fill="#4d5c8c"/></svg>
<div class="gb" style="left:872px;top:170px;width:272px;height:367px;"></div>
<div style="left:879px;top:163px;width:81px;height:14px;background:#fff"></div>
<span class="t" id="t47" style="font-size:12px;color:#000;top:164.50px;left:880px;transform-origin:0 50%;transform:scaleX(0.890);">Design Explorer</span>
<div class="btn" style="left:887px;top:191.5px;width:36px;height:36px;"></div>
<div class="btn" style="left:934px;top:191.5px;width:36px;height:36px;"></div>
<div class="btn" style="left:981px;top:191.5px;width:36px;height:36px;"></div>
<div class="btn" style="left:1027.5px;top:191.5px;width:36px;height:36px;"></div>
<svg style="left:887px;top:191.5px" width="36" height="36" viewBox="0 0 36 36"><defs><radialGradient id="gpb" cx=".5" cy=".4" r=".65"><stop offset="0" stop-color="#8fd4f8"/><stop offset=".6" stop-color="#3f9edc"/><stop offset="1" stop-color="#2a82c4"/></radialGradient></defs><path d="M14 6.500h8V14.500h8v8h-8v8h-8v-8H6v-8h8z" fill="url(#gpb)" stroke="#4a9ad2" stroke-width=".6"/></svg>
<svg style="left:934px;top:191.5px" width="36" height="36" viewBox="0 0 36 36"><defs><linearGradient id="grx" x1="0" y1="0" x2="0" y2="1"><stop offset="0" stop-color="#ff5a5a"/><stop offset=".5" stop-color="#f01c24"/><stop offset="1" stop-color="#d80c14"/></linearGradient></defs><path d="M5.500 11 11 5.500 18 12.500 25 5.500 30.500 11 23.500 18 30.500 25 25 30.500 18 23.500 11 30.500 5.500 25 12.500 18z" fill="url(#grx)" stroke="#6e060a" stroke-width="1.700" stroke-linejoin="round"/></svg>
<svg style="left:981px;top:191.5px" width="36" height="36" viewBox="0 0 36 36"><path d="M4 28V10q0-1.500 1.500-1.500H14l2.500 2.500H29q1.500 0 1.500 1.500V28z" fill="#d9a02a"/><path d="M3.500 29.500 6 15.500q.3-1.500 1.800-1.500H31.500q1.500 0 1.200 1.500L30.500 29.500z" fill="#f6cb5a" stroke="#dba52c" stroke-width=".6"/><path d="M17 17h3.500v4h4v3.500h-4v4H17v-4h-4V21h4z" fill="#45a5e4" stroke="#2476b4" stroke-width=".5"/></svg>
<svg style="left:1027.5px;top:191.5px" width="36" height="36" viewBox="0 0 36 36"><path d="M4.500 4h22l3.500 3.500V31.500h-25.500z" fill="#3a8cc6" stroke="#2a6c9e" stroke-width=".7"/><rect x="8.500" y="4.500" width="13" height="9" fill="#5aa6d8"/><rect x="9.500" y="5" width="3" height="6" fill="#dcecf8"/><rect x="7.500" y="19" width="19" height="12" fill="#f6f6f6"/><path d="M9.500 22h15M9.500 25h15M9.500 28h15" stroke="#c9c9c9" stroke-width="1"/><path d="M22.500 9h7v12.500H33.500L26 31.500 18.500 21.500h4z" fill="#6cc43a" stroke="#4c9c22" stroke-width=".6"/></svg>
<div style="left:881px;top:243px;width:255px;height:235px;background:#fff;border:1px solid #828790"></div>
<span class="t" id="t48" style="font-size:12px;color:#000;top:246.50px;left:885px;transform-origin:0 50%;transform:scaleX(0.869);">Design 1 - Frames: 12, Speed: 5, Repeat: 10</span>
<div style="left:883.5px;top:259.5px;width:250px;height:13.5px;background:#3399ff"></div>
<span class="t" id="t49" style="font-size:12px;color:#fff;top:260.50px;left:885px;transform-origin:0 50%;transform:scaleX(0.869);">Design 2 - Frames: 12, Speed: 5, Repeat: 10</span>
<span class="t" id="t50" style="font-size:12px;color:#000;top:488.50px;left:880.5px;transform-origin:0 50%;transform:scaleX(0.908);">Total Designs: 2</span>
<span class="t" id="t51" style="font-size:12px;color:#000;top:514.00px;left:880.5px;transform-origin:0 50%;transform:scaleX(0.902);">Free Memory: 21120 bytes</span>
<div style="left:1019px;top:512.5px;width:117px;height:16px;border:1px solid #b2b2b2;border-radius:3px;background:linear-gradient(#f0f0f0 0,#dcdcdc 30%,#cfcfcf 55%,#d9d9d9 100%)"></div>
<div style="left:1020px;top:513.5px;width:15px;height:14px;border-radius:2px 0 0 2px;background:linear-gradient(#a8eeb0 0,#4fdc5c 30%,#0dc321 55%,#1fd434 100%)"></div>
<div style="left:873px;top:548.5px;width:271px;height:44px;border:1px solid #707070;border-radius:3px;background:linear-gradient(#f2f2f2 0,#ebebeb 48%,#dddddd 50%,#d2d2d2 100%);box-shadow:inset 0 0 0 1px #fcfcfc"></div>
<span class="t" id="t52" style="font-size:12px;color:#000;top:564.50px;left:956.5px;transform-origin:0 50%;transform:scaleX(0.811);">GENERATE .HEX FILE</span>
<div style="left:0px;top:684px;width:1280px;height:36px;background:linear-gradient(#14161c 0,#07080e 12%,#04040a 50%,#030308 100%);border-top:1px solid #77797d"></div>
<svg style="left:3px;top:682px" width="44" height="38" viewBox="0 0 44 38"><defs><radialGradient id="gorb" cx=".5" cy=".5" r=".5"><stop offset="0" stop-color="#1a4f96"/><stop offset=".7" stop-color="#1d5aa6"/><stop offset=".92" stop-color="#5aa6dc"/><stop offset="1" stop-color="#bfe2f6"/></radialGradient><radialGradient id="gorb2" cx=".5" cy="1" r=".75"><stop offset="0" stop-color="#4fe0ff"/><stop offset=".55" stop-color="#1f9ee6" stop-opacity=".7"/><stop offset="1" stop-color="#1f9ee6" stop-opacity="0"/></radialGradient><linearGradient id="gorb3" x1="0" y1="0" x2="0" y2="1"><stop offset="0" stop-color="#fff" stop-opacity=".75"/><stop offset="1" stop-color="#fff" stop-opacity=".12"/></linearGradient></defs><circle cx="21.400" cy="20.300" r="17.800" fill="url(#gorb)"/><circle cx="21.400" cy="20.300" r="17" fill="url(#gorb2)"/><path d="M5.200 19.500a16.300 16.300 0 0 1 32.400 0q-8 4-16.200 1.500t-16.200-1.500z" fill="url(#gorb3)"/><path d="M12.500 11.500q4.500-2.800 9-.6l-1.500 7q-4.500-2-9 .4z" fill="#f0582a"/><path d="M22.800 11.300q4.500 2.200 9-.4l-1.500 7q-4.500 2.500-9 .4z" fill="#8cd04a"/><path d="M10.600 20q4.500-2.300 9-.4l-1.500 7q-4.500-2-9 .5z" fill="#36a6ea"/><path d="M21 20q4.500 2.200 9-.4l-1.500 7q-4.500 2.500-9 .4z" fill="#fad02a"/></svg>
<svg style="left:69px;top:691px" width="26" height="26" viewBox="0 0 26 26"><rect x="3" y="1.500" width="22" height="22" rx="1.500" fill="#8cc4ea"/><rect x="0.500" y="0.500" width="21" height="23" rx="1.500" fill="#a9d3ee" stroke="#c9e6f8" stroke-width=".6"/><circle cx="11.500" cy="13" r="8" fill="#f6841c" stroke="#fff" stroke-width="1"/><path d="M9 8.500 16 13 9 17.500z" fill="#fff"/></svg>
<svg style="left:126px;top:689px" width="30" height="28" viewBox="0 0 30 28"><path d="M1 21V3.500q0-1.500 1.500-1.500H10l2.500 2.500H27q1.500 0 1.500 1.500V21z" fill="#f2d56a" stroke="#d9b23a" stroke-width=".6"/><path d="M3 6h24v4H3z" fill="#fff"/><path d="M1 9h28v12H1z" fill="#f6df86"/><path d="M6 16h18v10H6z" fill="#7ec0f0" stroke="#4f9bd6" stroke-width=".8"/><path d="M9 19h12v7H9z" fill="#d9eefb"/></svg>
<svg style="left:184px;top:689px" width="28" height="28" viewBox="-50 -50 100 100"><circle r="49" fill="#fbc116"/><path d="M0 0 L-42.400 -24.500 A49 49 0 0 1 42.400 -24.500 L0 -24.500z" fill="#e33e2b"/><path d="M-42.400 -24.500 A49 49 0 0 1 42.400 -24.500 L0 -24.500z" fill="#e33e2b"/><path d="M-42.400 -24.500 A49 49 0 0 0 0 49 L21.200 12.200 L-21.200 12.200z" fill="#2ba24c"/><path d="M0 0L-42.400 -24.500 -21.200 12.200z" fill="#2ba24c"/><path d="M42.400 -24.500H0L21.200 12.200 0 49A49 49 0 0 0 42.400 -24.500z" fill="#fbc116"/><circle r="24.500" fill="#fff"/><circle r="19.500" fill="#3b7ded"/></svg>
<div style="left:230px;top:684px;width:48px;height:36px;border:1px solid #a4a7ad;border-radius:2px;background:linear-gradient(#a3a6ad 0,#6c6e75 45%,#3c3d43 50%,#505157 100%);box-shadow:inset 0 0 0 1px rgba(255,255,255,.35)"></div>
<svg style="left:238px;top:686.5px" width="30" height="30" viewBox="0 0 30 30"><rect width="30" height="30" fill="#1c1a18"/><line x1="22.5" y1="15.0" x2="25.8" y2="15.0" stroke="#b81818" stroke-width="1.1" stroke-linecap="butt"/><line x1="25.8" y1="15.0" x2="29.0" y2="15.0" stroke="#cfc060" stroke-width="1.1" stroke-linecap="butt"/><line x1="22.4" y1="16.2" x2="25.7" y2="16.7" stroke="#b81818" stroke-width="1.1" stroke-linecap="butt"/><line x1="25.7" y1="16.7" x2="28.8" y2="17.2" stroke="#cfc060" stroke-width="1.1" stroke-linecap="butt"/><line x1="22.1" y1="17.3" x2="25.3" y2="18.3" stroke="#b81818" stroke-width="1.1" stroke-linecap="butt"/><line x1="25.3" y1="18.3" x2="28.3" y2="19.3" stroke="#cfc060" stroke-width="1.1" stroke-linecap="butt"/><line x1="21.7" y1="18.4" x2="24.6" y2="19.9" stroke="#b81818" stroke-width="1.1" stroke-linecap="butt"/><line x1="24.6" y1="19.9" x2="27.5" y2="21.4" stroke="#cfc060" stroke-width="1.1" stroke-linecap="butt"/><line x1="21.1" y1="19.4" x2="23.7" y2="21.3" stroke="#b81818" stroke-width="1.1" stroke-linecap="butt"/><line x1="23.7" y1="21.3" x2="26.3" y2="23.2" stroke="#cfc060" stroke-width="1.1" stroke-linecap="butt"/><line x1="20.3" y1="20.3" x2="22.6" y2="22.6" stroke="#b81818" stroke-width="1.1" stroke-linecap="butt"/><line x1="22.6" y1="22.6" x2="24.9" y2="24.9" stroke="#cfc060" stroke-width="1.1" stroke-linecap="butt"/><line x1="19.4" y1="21.1" x2="21.3" y2="23.7" stroke="#b81818" stroke-width="1.1" stroke-linecap="butt"/><line x1="21.3" y1="23.7" x2="23.2" y2="26.3" stroke="#cfc060" stroke-width="1.1" stroke-linecap="butt"/><line x1="18.4" y1="21.7" x2="19.9" y2="24.6" stroke="#b81818" stroke-width="1.1" stroke-linecap="butt"/><line x1="19.9" y1="24.6" x2="21.4" y2="27.5" stroke="#cfc060" stroke-width="1.1" stroke-linecap="butt"/><line x1="17.3" y1="22.1" x2="18.3" y2="25.3" stroke="#b81818" stroke-width="1.1" stroke-linecap="butt"/><line x1="18.3" y1="25.3" x2="19.3" y2="28.3" stroke="#cfc060" stroke-width="1.1" stroke-linecap="butt"/><line x1="16.2" y1="22.4" x2="16.7" y2="25.7" stroke="#b81818" stroke-width="1.1" stroke-linecap="butt"/><line x1="16.7" y1="25.7" x2="17.2" y2="28.8" stroke="#cfc060" stroke-width="1.1" stroke-linecap="butt"/><line x1="15.0" y1="22.5" x2="15.0" y2="25.8" stroke="#b81818" stroke-width="1.1" stroke-linecap="butt"/><line x1="15.0" y1="25.8" x2="15.0" y2="29.0" stroke="#cfc060" stroke-width="1.1" stroke-linecap="butt"/><line x1="13.8" y1="22.4" x2="13.3" y2="25.7" stroke="#b81818" stroke-width="1.1" stroke-linecap="butt"/><line x1="13.3" y1="25.7" x2="12.8" y2="28.8" stroke="#cfc060" stroke-width="1.1" stroke-linecap="butt"/><line x1="12.7" y1="22.1" x2="11.7" y2="25.3" stroke="#b81818" stroke-width="1.1" stroke-linecap="butt"/><line x1="11.7" y1="25.3" x2="10.7" y2="28.3" stroke="#cfc060" stroke-width="1.1" stroke-linecap="butt"/><line x1="11.6" y1="21.7" x2="10.1" y2="24.6" stroke="#b81818" stroke-width="1.1" stroke-linecap="butt"/><line x1="10.1" y1="24.6" x2="8.6" y2="27.5" stroke="#cfc060" stroke-width="1.1" stroke-linecap="butt"/><line x1="10.6" y1="21.1" x2="8.7" y2="23.7" stroke="#b81818" stroke-width="1.1" stroke-linecap="butt"/><line x1="8.7" y1="23.7" x2="6.8" y2="26.3" stroke="#cfc060" stroke-width="1.1" stroke-linecap="butt"/><line x1="9.7" y1="20.3" x2="7.4" y2="22.6" stroke="#b81818" stroke-width="1.1" stroke-linecap="butt"/><line x1="7.4" y1="22.6" x2="5.1" y2="24.9" stroke="#cfc060" stroke-width="1.1" stroke-linecap="butt"/><line x1="8.9" y1="19.4" x2="6.3" y2="21.3" stroke="#b81818" stroke-width="1.1" stroke-linecap="butt"/><line x1="6.3" y1="21.3" x2="3.7" y2="23.2" stroke="#cfc060" stroke-width="1.1" stroke-linecap="butt"/><line x1="8.3" y1="18.4" x2="5.4" y2="19.9" stroke="#b81818" stroke-width="1.1" stroke-linecap="butt"/><line x1="5.4" y1="19.9" x2="2.5" y2="21.4" stroke="#cfc060" stroke-width="1.1" stroke-linecap="butt"/><line x1="7.9" y1="17.3" x2="4.7" y2="18.3" stroke="#b81818" stroke-width="1.1" stroke-linecap="butt"/><line x1="4.7" y1="18.3" x2="1.7" y2="19.3" stroke="#cfc060" stroke-width="1.1" stroke-linecap="butt"/><line x1="7.6" y1="16.2" x2="4.3" y2="16.7" stroke="#b81818" stroke-width="1.1" stroke-linecap="butt"/><line x1="4.3" y1="16.7" x2="1.2" y2="17.2" stroke="#cfc060" stroke-width="1.1" stroke-linecap="butt"/><line x1="7.5" y1="15.0" x2="4.2" y2="15.0" stroke="#b81818" stroke-width="1.1" stroke-linecap="butt"/><line x1="4.2" y1="15.0" x2="1.0" y2="15.0" stroke="#cfc060" stroke-width="1.1" stroke-linecap="butt"/><line x1="7.6" y1="13.8" x2="4.3" y2="13.3" stroke="#b81818" stroke-width="1.1" stroke-linecap="butt"/><line x1="4.3" y1="13.3" x2="1.2" y2="12.8" stroke="#cfc060" stroke-width="1.1" stroke-linecap="butt"/><line x1="7.9" y1="12.7" x2="4.7" y2="11.7" stroke="#b81818" stroke-width="1.1" stroke-linecap="butt"/><line x1="4.7" y1="11.7" x2="1.7" y2="10.7" stroke="#cfc060" stroke-width="1.1" stroke-linecap="butt"/><line x1="8.3" y1="11.6" x2="5.4" y2="10.1" stroke="#b81818" stroke-width="1.1" stroke-linecap="butt"/><line x1="5.4" y1="10.1" x2="2.5" y2="8.6" stroke="#cfc060" stroke-width="1.1" stroke-linecap="butt"/><line x1="8.9" y1="10.6" x2="6.3" y2="8.7" stroke="#b81818" stroke-width="1.1" stroke-linecap="butt"/><line x1="6.3" y1="8.7" x2="3.7" y2="6.8" stroke="#cfc060" stroke-width="1.1" stroke-linecap="butt"/><line x1="9.7" y1="9.7" x2="7.4" y2="7.4" stroke="#b81818" stroke-width="1.1" stroke-linecap="butt"/><line x1="7.4" y1="7.4" x2="5.1" y2="5.1" stroke="#cfc060" stroke-width="1.1" stroke-linecap="butt"/><line x1="10.6" y1="8.9" x2="8.7" y2="6.3" stroke="#b81818" stroke-width="1.1" stroke-linecap="butt"/><line x1="8.7" y1="6.3" x2="6.8" y2="3.7" stroke="#cfc060" stroke-width="1.1" stroke-linecap="butt"/><line x1="11.6" y1="8.3" x2="10.1" y2="5.4" stroke="#b81818" stroke-width="1.1" stroke-linecap="butt"/><line x1="10.1" y1="5.4" x2="8.6" y2="2.5" stroke="#cfc060" stroke-width="1.1" stroke-linecap="butt"/><line x1="12.7" y1="7.9" x2="11.7" y2="4.7" stroke="#b81818" stroke-width="1.1" stroke-linecap="butt"/><line x1="11.7" y1="4.7" x2="10.7" y2="1.7" stroke="#cfc060" stroke-width="1.1" stroke-linecap="butt"/><line x1="13.8" y1="7.6" x2="13.3" y2="4.3" stroke="#b81818" stroke-width="1.1" stroke-linecap="butt"/><line x1="13.3" y1="4.3" x2="12.8" y2="1.2" stroke="#cfc060" stroke-width="1.1" stroke-linecap="butt"/><line x1="15.0" y1="7.5" x2="15.0" y2="4.2" stroke="#b81818" stroke-width="1.1" stroke-linecap="butt"/><line x1="15.0" y1="4.2" x2="15.0" y2="1.0" stroke="#cfc060" stroke-width="1.1" stroke-linecap="butt"/><line x1="16.2" y1="7.6" x2="16.7" y2="4.3" stroke="#b81818" stroke-width="1.1" stroke-linecap="butt"/><line x1="16.7" y1="4.3" x2="17.2" y2="1.2" stroke="#cfc060" stroke-width="1.1" stroke-linecap="butt"/><line x1="17.3" y1="7.9" x2="18.3" y2="4.7" stroke="#b81818" stroke-width="1.1" stroke-linecap="butt"/><line x1="18.3" y1="4.7" x2="19.3" y2="1.7" stroke="#cfc060" stroke-width="1.1" stroke-linecap="butt"/><line x1="18.4" y1="8.3" x2="19.9" y2="5.4" stroke="#b81818" stroke-width="1.1" stroke-linecap="butt"/><line x1="19.9" y1="5.4" x2="21.4" y2="2.5" stroke="#cfc060" stroke-width="1.1" stroke-linecap="butt"/><line x1="19.4" y1="8.9" x2="21.3" y2="6.3" stroke="#b81818" stroke-width="1.1" stroke-linecap="butt"/><line x1="21.3" y1="6.3" x2="23.2" y2="3.7" stroke="#cfc060" stroke-width="1.1" stroke-linecap="butt"/><line x1="20.3" y1="9.7" x2="22.6" y2="7.4" stroke="#b81818" stroke-width="1.1" stroke-linecap="butt"/><line x1="22.6" y1="7.4" x2="24.9" y2="5.1" stroke="#cfc060" stroke-width="1.1" stroke-linecap="butt"/><line x1="21.1" y1="10.6" x2="23.7" y2="8.7" stroke="#b81818" stroke-width="1.1" stroke-linecap="butt"/><line x1="23.7" y1="8.7" x2="26.3" y2="6.8" stroke="#cfc060" stroke-width="1.1" stroke-linecap="butt"/><line x1="21.7" y1="11.6" x2="24.6" y2="10.1" stroke="#b81818" stroke-width="1.1" stroke-linecap="butt"/><line x1="24.6" y1="10.1" x2="27.5" y2="8.6" stroke="#cfc060" stroke-width="1.1" stroke-linecap="butt"/><line x1="22.1" y1="12.7" x2="25.3" y2="11.7" stroke="#b81818" stroke-width="1.1" stroke-linecap="butt"/><line x1="25.3" y1="11.7" x2="28.3" y2="10.7" stroke="#cfc060" stroke-width="1.1" stroke-linecap="butt"/><line x1="22.4" y1="13.8" x2="25.7" y2="13.3" stroke="#b81818" stroke-width="1.1" stroke-linecap="butt"/><line x1="25.7" y1="13.3" x2="28.8" y2="12.8" stroke="#cfc060" stroke-width="1.1" stroke-linecap="butt"/><g fill="#0e1208" stroke="#1c3a12" stroke-width=".5"><circle cx="15" cy="11" r="4.600"/><circle cx="11" cy="17.800" r="4.600"/><circle cx="19" cy="17.800" r="4.600"/></g><circle cx="15" cy="15.500" r="4" fill="#0e1208"/></svg>
<div style="left:282px;top:685px;width:2px;height:35px;background:#3a3c42"></div>
<div style="left:288px;top:684px;width:55px;height:36px;border:1px solid #6d7076;border-radius:2px;background:linear-gradient(#55575d 0,#2c2d32 45%,#121216 50%,#1d1e22 100%);box-shadow:inset 0 0 0 1px rgba(255,255,255,.18)"></div>
<svg style="left:300px;top:686px" width="31" height="31" viewBox="0 0 48 48"><rect width="48" height="48" fill="#0e8ee9"/><circle cx="24" cy="24" r="20" fill="#fff"/><path d="M6 24l10-7v4.500h16V17l10 7-10 7v-4.500H16V31z" fill="#0e6fd0"/></svg>
<svg style="left:1137px;top:700px" width="8" height="6" viewBox="0 0 8 6"><path d="M0 5.500 4 .5 8 5.500z" fill="#fff"/></svg>
<svg style="left:1158px;top:695px" width="11" height="15" viewBox="0 0 11 15"><rect x="3.500" y="0" width="4" height="2" fill="#fff"/><rect x="1" y="1.800" width="9" height="12.500" rx="1.500" fill="none" stroke="#fff" stroke-width="1.500"/><rect x="3" y="7.500" width="5" height="5" fill="#fff"/></svg>
<svg style="left:1179px;top:697px" width="15" height="12" viewBox="0 0 15 12" fill="#fff"><rect x="0" y="10" width="2" height="2"/><rect x="3" y="8" width="2" height="4"/><rect x="6" y="5.500" width="2" height="6.500"/><rect x="9" y="3" width="2" height="9"/><rect x="12" y="0" width="2.300" height="12"/></svg>
<span class="t" id="t53" style="font-size:12px;color:#fff;top:689.50px;left:1234px;transform:translateX(-50%) scaleX(0.895);">7:49 PM</span>
<span class="t" id="t54" style="font-size:12px;color:#fff;top:705.50px;left:1233.5px;transform:translateX(-50%) scaleX(0.918);">7/10/2018</span>
<div style="left:1268px;top:685px;width:12px;height:35px;border-left:1px solid #5a5d63;background:linear-gradient(#3a3c42,#15161a)"></div>
<svg style="left:1256px;top:586px" width="24" height="48" viewBox="0 0 24 48"><path d="M4.500 .8H24V46L2.500 34.500Q1.200 33.500 1.200 32V4Q1.200 .8 4.500 .8z" fill="#6a6a6a"/><rect x="5" y="6" width="19" height="18.500" fill="#1b5892"/><circle cx="15" cy="15" r="6.800" fill="#7d7d7d"/><path d="M8.500 15l4-2.800v1.900h7v1.800h-7v1.900z" fill="#23508c"/><rect x="20" y="12.500" width="4" height="2.500" fill="#2d8a4a"/><rect x="20" y="21" width="4" height="2" fill="#2d8a4a"/></svg>
</div>
</body></html>
